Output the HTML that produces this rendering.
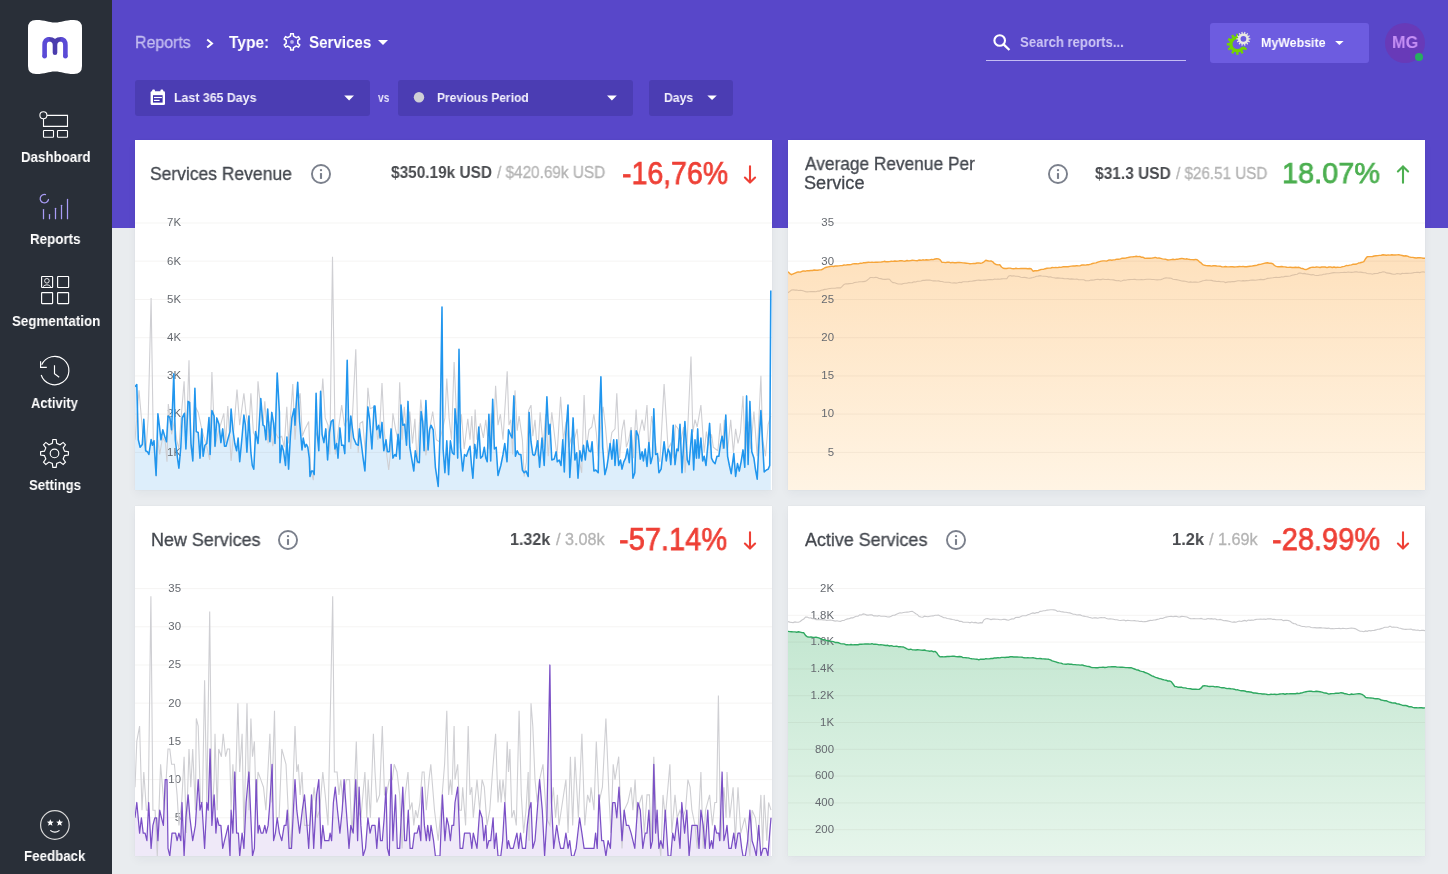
<!DOCTYPE html>
<html><head><meta charset="utf-8">
<style>
html,body{margin:0;padding:0;}
body{width:1448px;height:874px;overflow:hidden;position:relative;background:#e9ecef;font-family:"Liberation Sans",sans-serif;}
.t{position:absolute;white-space:nowrap;line-height:1;transform-origin:0 0;will-change:transform;}
.ic{position:absolute;overflow:visible;}
.bm{display:inline-block;width:0;height:0;}
#side{position:absolute;left:0;top:0;width:112px;height:874px;background:#292f38;}
#head{position:absolute;left:112px;top:0;width:1336px;height:228px;background:#5847c9;}
.btn{position:absolute;background:#4b3db3;border-radius:3px;}
.card{position:absolute;width:637px;height:350px;background:#fff;box-shadow:0 0 1px rgba(40,50,70,0.08),0 4px 9px rgba(30,40,60,0.045);overflow:hidden;}
.ch{position:absolute;left:0;top:0;will-change:transform;}
.gl{stroke:rgba(60,40,20,0.05);stroke-width:1;}
.yl{font-family:"Liberation Sans",sans-serif;font-size:11.4px;fill:#666a70;text-anchor:end;}
</style></head>
<body>
<div id="side"></div>
<div id="head"></div>
<!-- filter buttons -->
<div class="btn" style="left:135px;top:80px;width:235px;height:35.5px;"></div>
<div class="btn" style="left:398px;top:80px;width:235px;height:35.5px;"></div>
<div class="btn" style="left:649px;top:80px;width:84px;height:35.5px;"></div>
<div class="btn" style="left:1210px;top:23px;width:159px;height:39.5px;background:#6d5ce0;"></div>
<!-- search underline -->
<div style="position:absolute;left:986px;top:59.7px;width:200px;height:1.4px;background:#c4bcf3;"></div>
<!-- avatar -->
<div style="position:absolute;left:1385px;top:23px;width:40px;height:40px;border-radius:50%;background:#683ab8;"></div>
<div style="position:absolute;left:1415px;top:53px;width:8px;height:8px;border-radius:50%;background:#27ae60;"></div>

<!-- cards -->
<div class="card" style="left:135px;top:140px;"><svg class="ch" width="637" height="350" viewBox="0 0 637 350">
<path d="M0,350 L0,246.8 1.8,244.6 3.3,299.8 5.1,307.2 7.3,304.4 8.8,279.3 10.6,310.8 12.4,311.7 13.9,314.5 16.1,299.5 17.4,305.3 19,300.8 21.1,335.5 22.9,273.8 24.3,285.2 26,299.8 27.8,289.8 29.7,296.2 31.5,301.7 33,276 34.8,277.5 36.6,289.8 38.8,233.9 40.3,299.8 42.5,318.1 43.9,328.2 45.8,307.2 47.2,277.9 49.4,273.3 50.9,309 53.1,261.4 54.6,262.3 56,303.5 57.8,320.9 59.9,248.2 61.3,291.6 63.2,292.5 65,318.1 66.8,288.9 68.1,316.3 69.9,305.3 71.8,303.5 74,277.5 75.1,314.5 76.9,270.5 79.1,276 80,306.2 81.8,277.9 84,284.3 85.9,302.6 87.7,288.9 89.5,306.2 91,306.2 93.2,298 95,291.6 96.1,269.1 97.9,289.8 99.8,303.5 101.6,310.8 103.1,298 104.7,321.8 107.1,296.2 108.9,275.1 110.4,285.2 111.9,312.3 113.9,276 115.9,312.7 117.3,325.5 118.8,329.1 120.6,291.6 123,303.5 125.8,258.6 128,285.2 129.4,286.1 130.9,299.8 132.7,269.1 134.9,301.7 136.8,272.4 138.6,283.4 140,303.5 142.2,233 144.4,272.4 145,322.7 146.8,305.3 148.5,310.8 150.5,325.5 151.9,297.1 153.6,329.1 155.4,296.2 156.9,277.9 159.1,268.7 160,285.2 160.9,268.7 162.7,242.2 164.6,281.5 167,309.9 168.2,298 170.1,307.2 171.4,304.4 172.8,307.2 174.3,318.1 175,336.5 176.5,331 177.9,331 179.2,334.6 181.1,253.2 182.3,294.3 183.8,310.8 185.6,251.3 187.1,294.3 188.9,302.6 190.8,288.9 192.6,320 194.4,292.5 196.2,281.5 198.1,279.7 199.9,309 201.7,303.5 203,318.1 204.9,287.9 206.7,305.3 208.5,305.3 209.8,313.6 212.2,220.2 214,301.7 215.8,276 218.6,298 221.3,304.4 223.2,305.3 224.4,288.9 226.3,303.5 228.1,318.1 229.9,331 232.9,266.9 234.7,279.7 236.9,309 239.1,266 240,266 241.8,289.8 243.7,285.2 245.1,298 247,282.4 248.8,310.8 251,299.8 252.4,311.7 254.3,311.7 256.1,288.9 257.9,318.1 259.8,314.5 261.2,316.3 263.1,294.3 264.9,319.1 266,265.1 267.8,285.2 269.7,284.3 271.5,305.3 273,261.4 274.8,307.2 276.6,318.1 278.8,331 280.3,310.8 282.5,321.8 284.3,322.7 286.1,271.5 287.6,281.5 289.1,310.8 290.9,260.5 293.1,309.9 294.6,289.8 296,285.2 298.2,289.8 300.4,327.3 303.2,346.5 305,296.2 307,167.1 308.1,309 309.9,332.8 311.8,300.8 313.6,334.6 315.4,300.8 317.3,312.7 319.1,314.5 320,268.7 321.5,285.2 322.7,318.1 324,209.2 325.5,307.2 327.7,331 329.5,314.5 331.4,316.3 333.2,310.8 335,306.2 336.5,325.5 337.9,338.3 339.8,304.4 341.6,318.1 343.8,287 345.6,318.1 347.5,316.3 349.3,307.2 350.8,318.1 352.2,321.8 353.9,274.2 355.7,320.9 357.7,259.2 359.4,309 361.2,307.2 363,335.5 365.8,325.5 368,314.5 369.8,303.5 372,321.8 373.5,289.8 375.3,294.3 377.1,298 378.9,255.9 380.4,316.3 382.2,310.8 384.1,314.5 385.9,314.5 387.4,330 389.2,332.8 391,331 393.2,336.5 394.1,272.4 396,301.7 397.8,314.5 399.1,315.4 400,314.5 402.7,300.8 404.6,327.3 407,298 409.2,325.5 411.9,256.8 413.7,294.3 415,284.3 416.8,320 419.2,319.1 421.1,311.7 422.3,321.8 424.2,320 426,325.5 427.8,299.8 429.3,331.9 430.8,294.3 433,265.1 434.8,337.4 436.6,309 438.1,277.9 439.9,320 441.7,312.7 443,338.3 444.9,310.8 446.7,320.9 448.5,305.3 450.3,320 452.2,300.8 454,310.8 455.8,311.7 457.1,301.7 458.9,331 460.8,330 463.2,332.8 464.4,277.9 465.9,236.7 467.7,307.2 469.9,334.6 471.8,327.3 473.2,318.1 475.1,303.5 476.9,319.1 478.7,299.8 480,325.5 481.8,299.8 483.7,325.5 485.5,320 487,329.1 488.8,321.8 490.6,318.1 492.4,309 494.3,322.7 496.1,290.7 497.9,338.3 499.8,332.8 501.2,290.7 503.4,296.2 505.3,319.1 507.1,311.7 508.4,320.9 510.2,309 512,326.4 513.9,302.6 515.7,323.6 517.5,316.3 518.8,268.7 520.6,314.5 522.5,313.6 523.9,332.8 526.1,329.1 529.1,301.7 531.3,320.9 533.1,309 534.6,312.7 535.8,324.6 538.2,285.2 540,324.6 541.9,309 543.2,310.8 545,284.3 547,332.8 549.9,281.5 552.3,320 554.1,324.6 556.9,289.8 558.7,330 560,299.8 561.5,318.1 562.7,288.9 564,318.1 565.9,298 567.7,320.9 569.2,316.3 571,325.5 572.8,305.3 574.6,283.4 576.5,318.1 578.3,321.8 580.1,323.6 582,316.3 583.8,316.3 585.6,303.5 587.1,296.2 588.9,308.1 590.8,275.1 592.6,316.3 594.4,325.5 596.2,333.7 598.8,313.6 600.6,336.5 602.5,323.6 604.3,331 606.1,321.8 608,309.9 609.8,327.3 611.6,255.9 613.1,324.6 614.9,261.4 616.8,311.7 618.9,318.1 620.4,329.1 622.2,339.2 624.1,299.8 625.9,270.5 627.4,299.8 629.2,331.9 631.4,330 633.2,329.1 634.7,325.5 635.8,150.6 L635.8,350 Z" fill="#ddeefb"/>
<line x1="0" x2="637" y1="312.4" y2="312.4" class="gl"/>
<line x1="0" x2="637" y1="274.1" y2="274.1" class="gl"/>
<line x1="0" x2="637" y1="235.9" y2="235.9" class="gl"/>
<line x1="0" x2="637" y1="197.7" y2="197.7" class="gl"/>
<line x1="0" x2="637" y1="159.5" y2="159.5" class="gl"/>
<line x1="0" x2="637" y1="121.2" y2="121.2" class="gl"/>
<line x1="0" x2="637" y1="83" y2="83" class="gl"/>
<text x="46" y="315.7" class="yl">1K</text>
<text x="46" y="277.4" class="yl">2K</text>
<text x="46" y="239.2" class="yl">3K</text>
<text x="46" y="201" class="yl">4K</text>
<text x="46" y="162.8" class="yl">5K</text>
<text x="46" y="124.5" class="yl">6K</text>
<text x="46" y="86.3" class="yl">7K</text>
<polyline points="0,299.8 4,250.4 6.4,277.9 8.2,299.8 11,310.8 13.2,277.9 16.1,158 18.3,299.8 21.1,336.5 22.9,299.8 24.7,314.5 27.5,298 30.2,301.7 32,321.8 33.3,264.1 34.8,276 36.6,294.3 39.4,281.5 41.7,299.8 43.9,309 46.1,277.9 49.1,241.3 51.3,299.8 54,220.2 55.8,307.2 58.2,319.1 60.4,266.9 63.2,272.4 65.9,285.2 68.6,296.2 72.3,309 74.7,320 76.9,232.1 80,307.2 82.7,294.3 85.5,285.2 88.8,273.3 90.6,303.5 92.8,266 96.1,320.9 98.3,296.2 102,249.5 104.7,285.2 108.9,253.2 111.1,274.2 113.9,290.7 115.9,253.2 118.4,292.5 121.2,298 123,241.3 125.8,270.5 128,285.2 129.8,261.4 133.1,303.5 134.9,281.5 137.8,306.2 140.4,292.5 143.2,298 146.8,296.2 149.2,307.2 151.8,266.9 153.6,303.5 157.8,244 160,299.8 162.7,263.2 165.1,253.2 167.3,296.2 170.1,288.9 173.7,281.5 175.6,329.1 178.3,340.1 181.1,292.5 183.8,299.8 187.8,238.5 190.2,277.9 193,285.2 194.8,314.5 197.5,116.8 200.3,314.5 203,292.5 206.7,265.1 209.4,285.2 213.1,277.9 215.8,309 220.8,209.2 223.2,312.7 225,283.4 227.7,281.5 230.5,314.5 232.9,247.7 235.1,268.7 239.1,266.9 242.7,299.8 244.6,290.7 247,243.1 249.2,290.7 251.9,316.3 253.7,330 256.1,307.2 257.9,273.3 260.5,288.9 262.9,299.8 264.7,242.2 267.1,299.8 269.3,266.9 272,299.8 274.8,271.5 277.5,303.5 279.9,278.8 282.1,323.6 285.8,259.6 288,281.5 290.9,315.4 294,292.5 297.7,271.5 301.3,299.8 304.1,301.7 307.7,288.9 309.9,277.9 311.8,238.5 314.1,277.9 316.5,299.8 319.1,222 321.8,281.5 324,303.5 326.4,274.2 329.2,309 332.8,278.8 335,299.8 336.8,276 338.7,309 340.1,269.6 342,299.8 345.3,283.4 348.4,298 350.8,279.7 353.9,309 356.2,273.3 358.4,299.8 360.6,245.8 363,285.2 365.4,274.2 368,299.8 372.2,231.2 374,285.2 375.8,279.7 377.7,314.5 380,250.4 382.2,290.7 384.1,276 387.4,299.8 389.2,336.5 391.4,321.8 393.6,270.5 396,265.1 397.8,296.2 400,279.7 402.7,316.3 405.1,272.4 408.2,307.2 410.6,274.2 413.2,316.3 416.8,272.4 419.2,292.5 422,316.3 425.6,256.8 428.4,299.8 431.1,281.5 433.9,307.2 436.2,298 438.4,303.5 442.1,288.9 444.9,323.6 446.7,332.8 449.1,255 451.3,309 454,289.8 456.8,287 458.9,274.2 461.3,292.5 463.2,316.3 466.3,277.9 468.1,266.9 470.5,287 473.2,318.1 476.9,292.5 480,288.9 481.8,253.2 484.6,318.1 487,290.7 489.2,279.7 491.4,307.2 493.7,299.8 496.1,287 498.3,318.1 501.1,269.6 502.9,299.8 507.1,279.7 509.3,290.7 512,265.1 513.9,310.8 516.6,276 519.4,294.3 522.1,314.5 524.9,321.8 529.1,244 533.1,309 535.8,303.5 538.6,318.1 540.4,285.2 543.2,288.9 545.5,303.5 548.6,287 550.1,332.8 551.8,309 556,216.5 557.8,292.5 560,279.7 562.2,287 565.9,265.1 569.2,312.7 571.4,291.6 573.7,305.3 576.5,294.3 578.3,307.2 580.5,309 582.9,310.8 585.3,283.4 587.5,309 589.3,279.7 592.6,310.8 595.7,279.7 598.4,312.7 600.6,288.9 603,303.5 605.4,292.5 608,255.9 610.3,316.3 613.1,281.5 615.8,309 618.9,271.5 622.2,316.3 625.9,235.8 627.7,299.8 630.5,316.3 633.2,284.3 635.8,276" fill="none" stroke="#cfcfd3" stroke-width="1.1"/>
<polyline points="0,246.8 1.8,244.6 3.3,299.8 5.1,307.2 7.3,304.4 8.8,279.3 10.6,310.8 12.4,311.7 13.9,314.5 16.1,299.5 17.4,305.3 19,300.8 21.1,335.5 22.9,273.8 24.3,285.2 26,299.8 27.8,289.8 29.7,296.2 31.5,301.7 33,276 34.8,277.5 36.6,289.8 38.8,233.9 40.3,299.8 42.5,318.1 43.9,328.2 45.8,307.2 47.2,277.9 49.4,273.3 50.9,309 53.1,261.4 54.6,262.3 56,303.5 57.8,320.9 59.9,248.2 61.3,291.6 63.2,292.5 65,318.1 66.8,288.9 68.1,316.3 69.9,305.3 71.8,303.5 74,277.5 75.1,314.5 76.9,270.5 79.1,276 80,306.2 81.8,277.9 84,284.3 85.9,302.6 87.7,288.9 89.5,306.2 91,306.2 93.2,298 95,291.6 96.1,269.1 97.9,289.8 99.8,303.5 101.6,310.8 103.1,298 104.7,321.8 107.1,296.2 108.9,275.1 110.4,285.2 111.9,312.3 113.9,276 115.9,312.7 117.3,325.5 118.8,329.1 120.6,291.6 123,303.5 125.8,258.6 128,285.2 129.4,286.1 130.9,299.8 132.7,269.1 134.9,301.7 136.8,272.4 138.6,283.4 140,303.5 142.2,233 144.4,272.4 145,322.7 146.8,305.3 148.5,310.8 150.5,325.5 151.9,297.1 153.6,329.1 155.4,296.2 156.9,277.9 159.1,268.7 160,285.2 160.9,268.7 162.7,242.2 164.6,281.5 167,309.9 168.2,298 170.1,307.2 171.4,304.4 172.8,307.2 174.3,318.1 175,336.5 176.5,331 177.9,331 179.2,334.6 181.1,253.2 182.3,294.3 183.8,310.8 185.6,251.3 187.1,294.3 188.9,302.6 190.8,288.9 192.6,320 194.4,292.5 196.2,281.5 198.1,279.7 199.9,309 201.7,303.5 203,318.1 204.9,287.9 206.7,305.3 208.5,305.3 209.8,313.6 212.2,220.2 214,301.7 215.8,276 218.6,298 221.3,304.4 223.2,305.3 224.4,288.9 226.3,303.5 228.1,318.1 229.9,331 232.9,266.9 234.7,279.7 236.9,309 239.1,266 240,266 241.8,289.8 243.7,285.2 245.1,298 247,282.4 248.8,310.8 251,299.8 252.4,311.7 254.3,311.7 256.1,288.9 257.9,318.1 259.8,314.5 261.2,316.3 263.1,294.3 264.9,319.1 266,265.1 267.8,285.2 269.7,284.3 271.5,305.3 273,261.4 274.8,307.2 276.6,318.1 278.8,331 280.3,310.8 282.5,321.8 284.3,322.7 286.1,271.5 287.6,281.5 289.1,310.8 290.9,260.5 293.1,309.9 294.6,289.8 296,285.2 298.2,289.8 300.4,327.3 303.2,346.5 305,296.2 307,167.1 308.1,309 309.9,332.8 311.8,300.8 313.6,334.6 315.4,300.8 317.3,312.7 319.1,314.5 320,268.7 321.5,285.2 322.7,318.1 324,209.2 325.5,307.2 327.7,331 329.5,314.5 331.4,316.3 333.2,310.8 335,306.2 336.5,325.5 337.9,338.3 339.8,304.4 341.6,318.1 343.8,287 345.6,318.1 347.5,316.3 349.3,307.2 350.8,318.1 352.2,321.8 353.9,274.2 355.7,320.9 357.7,259.2 359.4,309 361.2,307.2 363,335.5 365.8,325.5 368,314.5 369.8,303.5 372,321.8 373.5,289.8 375.3,294.3 377.1,298 378.9,255.9 380.4,316.3 382.2,310.8 384.1,314.5 385.9,314.5 387.4,330 389.2,332.8 391,331 393.2,336.5 394.1,272.4 396,301.7 397.8,314.5 399.1,315.4 400,314.5 402.7,300.8 404.6,327.3 407,298 409.2,325.5 411.9,256.8 413.7,294.3 415,284.3 416.8,320 419.2,319.1 421.1,311.7 422.3,321.8 424.2,320 426,325.5 427.8,299.8 429.3,331.9 430.8,294.3 433,265.1 434.8,337.4 436.6,309 438.1,277.9 439.9,320 441.7,312.7 443,338.3 444.9,310.8 446.7,320.9 448.5,305.3 450.3,320 452.2,300.8 454,310.8 455.8,311.7 457.1,301.7 458.9,331 460.8,330 463.2,332.8 464.4,277.9 465.9,236.7 467.7,307.2 469.9,334.6 471.8,327.3 473.2,318.1 475.1,303.5 476.9,319.1 478.7,299.8 480,325.5 481.8,299.8 483.7,325.5 485.5,320 487,329.1 488.8,321.8 490.6,318.1 492.4,309 494.3,322.7 496.1,290.7 497.9,338.3 499.8,332.8 501.2,290.7 503.4,296.2 505.3,319.1 507.1,311.7 508.4,320.9 510.2,309 512,326.4 513.9,302.6 515.7,323.6 517.5,316.3 518.8,268.7 520.6,314.5 522.5,313.6 523.9,332.8 526.1,329.1 529.1,301.7 531.3,320.9 533.1,309 534.6,312.7 535.8,324.6 538.2,285.2 540,324.6 541.9,309 543.2,310.8 545,284.3 547,332.8 549.9,281.5 552.3,320 554.1,324.6 556.9,289.8 558.7,330 560,299.8 561.5,318.1 562.7,288.9 564,318.1 565.9,298 567.7,320.9 569.2,316.3 571,325.5 572.8,305.3 574.6,283.4 576.5,318.1 578.3,321.8 580.1,323.6 582,316.3 583.8,316.3 585.6,303.5 587.1,296.2 588.9,308.1 590.8,275.1 592.6,316.3 594.4,325.5 596.2,333.7 598.8,313.6 600.6,336.5 602.5,323.6 604.3,331 606.1,321.8 608,309.9 609.8,327.3 611.6,255.9 613.1,324.6 614.9,261.4 616.8,311.7 618.9,318.1 620.4,329.1 622.2,339.2 624.1,299.8 625.9,270.5 627.4,299.8 629.2,331.9 631.4,330 633.2,329.1 634.7,325.5 635.8,150.6" fill="none" stroke="#2196ee" stroke-width="1.55" stroke-linejoin="round"/>
</svg></div>
<div class="card" style="left:788px;top:140px;"><svg class="ch" width="637" height="350" viewBox="0 0 637 350">
<defs><linearGradient id="g2" x1="0" y1="0" x2="0" y2="1"><stop offset="0" stop-color="#fee1bd"/><stop offset="1" stop-color="#fff4e4"/></linearGradient></defs>
<path d="M0,350 L0,131.8 1.8,133.6 3.5,134.7 5.2,133.9 7,133.1 8.8,132.3 10.5,131.9 12.2,132.1 14,131.3 15.8,130.9 17.5,131.2 19.2,130.7 21,130.8 22.8,130.5 24.5,130.5 26.2,130 28,130.2 29.8,130.3 31.5,129.9 33.2,129.9 35,129 36.8,127.7 38.5,127.3 40.2,126.9 42,126.5 43.8,126.1 45.5,126.5 47.2,126 49,126 50.8,125.9 52.5,125.6 54.2,125.6 56,125 57.8,125.1 59.5,124.7 61.2,124.8 63,124.6 64.8,123.9 66.5,123.7 68.2,123.6 70,123.9 71.8,123.3 73.5,123.3 75.2,122.8 77,122.8 78.8,122.5 80.5,122.3 82.2,122.4 84,122.3 85.8,122.4 87.5,122.2 89.2,122.3 91,122.1 92.8,122.1 94.5,121.8 96.2,121.3 98,121.7 99.8,121.7 101.5,121.6 103.2,121.3 105,121.4 106.8,121 108.5,121.3 110.2,121.1 112,120.8 113.8,120.6 115.5,121.1 117.2,121.2 119,120.5 120.8,120.9 122.5,120.6 124.2,120.3 126,120.4 127.8,120.6 129.5,120.7 131.2,120 133,120.3 134.8,119.8 136.5,120.1 138.2,119.7 140,120 141.8,119.9 143.5,119.4 145.2,119.6 147,119 148.8,118.7 150.5,118.9 152.2,119.9 154,122.3 155.8,122.4 157.5,122.6 159.2,122.3 161,122.2 162.8,122.8 164.5,122.4 166.2,122.8 168,122.8 169.8,122.4 171.5,122.5 173.2,122.6 175,122.9 176.8,123 178.5,123.2 180.2,123.4 182,123.8 183.8,123.6 185.5,123.4 187.2,123.5 189,123 190.8,122.9 192.5,123.3 194.2,122.8 196,121.8 197.8,120.3 199.5,120.7 201.2,121.1 203,120.9 204.8,121.8 206.5,123.7 208.2,124.5 210,124.9 211.8,124.8 213.5,127 215.2,128.2 217,128.5 218.8,128.5 220.5,128.1 222.2,128.1 224,128.6 225.8,128.8 227.5,128.3 229.2,128.5 231,128.6 232.8,128.4 234.5,128.5 236.2,128.5 238,128.5 239.8,128.7 241.5,128.5 243.2,128.8 245,131.2 246.8,130.8 248.5,130.8 250.2,130.5 252,129.8 253.8,129.4 255.5,129.4 257.2,128.7 259,128.3 260.8,128.1 262.5,128.1 264.2,127.5 266,127.6 267.8,127.4 269.5,127.6 271.2,127.2 273,127.4 274.8,126.8 276.5,126.7 278.2,126.8 280,126.8 281.8,126.4 283.5,126.1 285.2,125.9 287,126 288.8,125.6 290.5,125.9 292.2,125.7 294,125 295.8,124.9 297.5,125.1 299.2,124.8 301,124.7 302.8,124.2 304.5,123.5 306.2,123.1 308,122.9 309.8,122.1 311.5,121.6 313.2,121.1 315,120.9 316.8,120.9 318.5,121.1 320.2,120.3 322,119.9 323.8,120.3 325.5,119.9 327.2,119.7 329,119.1 330.8,119.2 332.5,118.9 334.2,118.1 336,118.2 337.8,118 339.5,117.6 341.2,117.2 343,116.9 344.8,116.8 346.5,116.6 348.2,116.3 350,116.6 351.8,116.4 353.5,117.3 355.2,117.3 357,118.4 358.8,118.2 360.5,118.3 362.2,118.2 364,118.1 365.8,117.8 367.5,117.4 369.2,118.1 371,118 372.8,118.4 374.5,118.9 376.2,119.1 378,119.3 379.8,120 381.5,119.9 383.2,119.6 385,119.3 386.8,119.6 388.5,119.2 390.2,119.2 392,118.7 393.8,118.4 395.5,118.7 397.2,119.1 399,118.8 400.8,119.3 402.5,119.6 404.2,119.6 406,119.8 407.8,119.4 409.5,120 411.2,121.6 413,122.8 414.8,124.7 416.5,125.3 418.2,125.6 420,125.7 421.8,125.8 423.5,126.1 425.2,125.7 427,125.8 428.8,126 430.5,126.1 432.2,126.2 434,126.9 435.8,126.9 437.5,126.5 439.2,126.9 441,126.9 442.8,126.8 444.5,126.8 446.2,127 448,126.9 449.8,126.7 451.5,126.5 453.2,126.6 455,126.4 456.8,126.7 458.5,126.8 460.2,126.5 462,126.2 463.8,126.1 465.5,125.8 467.2,125.5 469,125.2 470.8,124.5 472.5,124.4 474.2,123.9 476,123.4 477.8,123 479.5,122.8 481.2,123.2 483,123.3 484.8,123.7 486.5,125.5 488.2,126.4 490,126.7 491.8,126.8 493.5,126.5 495.2,126.8 497,126.9 498.8,127.3 500.5,127.4 502.2,127.1 504,127.5 505.8,127.5 507.5,127.3 509.2,127.5 511,127.3 512.8,128.2 514.5,128.5 516.2,129.2 518,129.6 519.8,128.8 521.5,128 523.2,127.4 525,127.1 526.8,127.4 528.5,127 530.2,127.1 532,127.5 533.8,127 535.5,127 537.2,127 539,127.6 540.8,127 542.5,126.9 544.2,127.5 546,127 547.8,127.5 549.5,127.3 551.2,127.4 553,127.2 554.8,126.6 556.5,126.4 558.2,125.5 560,125.6 561.8,125.1 563.5,124.9 565.2,124.1 567,124.2 568.8,124 570.5,123 572.2,122.7 574,122.3 575.8,121.7 577.5,118.8 579.2,116.7 581,116.6 582.8,116.6 584.5,116.5 586.2,116 588,115.8 589.8,115.6 591.5,115.4 593.2,115.2 595,114.8 596.8,115 598.5,115.3 600.2,114.9 602,115.1 603.8,114.7 605.5,115 607.2,115 609,114.9 610.8,114.8 612.5,115.1 614.2,115.5 616,116 617.8,115.8 619.5,116.1 621.2,116.9 623,117.4 624.8,117.4 626.5,117.7 628.2,118 630,117.7 631.8,117.8 633.5,117.9 635.2,118.3 637,118.2 L637,350 Z" fill="url(#g2)"/>
<line x1="0" x2="637" y1="312.4" y2="312.4" class="gl"/>
<line x1="0" x2="637" y1="274.1" y2="274.1" class="gl"/>
<line x1="0" x2="637" y1="235.9" y2="235.9" class="gl"/>
<line x1="0" x2="637" y1="197.7" y2="197.7" class="gl"/>
<line x1="0" x2="637" y1="159.5" y2="159.5" class="gl"/>
<line x1="0" x2="637" y1="121.2" y2="121.2" class="gl"/>
<line x1="0" x2="637" y1="83" y2="83" class="gl"/>
<text x="46" y="315.7" class="yl">5</text>
<text x="46" y="277.4" class="yl">10</text>
<text x="46" y="239.2" class="yl">15</text>
<text x="46" y="201" class="yl">20</text>
<text x="46" y="162.8" class="yl">25</text>
<text x="46" y="124.5" class="yl">30</text>
<text x="46" y="86.3" class="yl">35</text>
<polyline points="0,152.8 1.8,151.4 3.5,150 5.2,149.7 7,150.1 8.8,150 10.5,150.5 12.2,150.4 14,150.5 15.8,151.1 17.5,151.6 19.2,151.9 21,151.8 22.8,151.5 24.5,151.6 26.2,151.5 28,151.7 29.8,151 31.5,151.1 33.2,150.3 35,149.9 36.8,149.4 38.5,149.2 40.2,148.8 42,148.5 43.8,148.3 45.5,148.3 47.2,148.2 49,147.8 50.8,147.9 52.5,147.9 54.2,146.3 56,144.4 57.8,143.8 59.5,143.9 61.2,143.6 63,143.5 64.8,143.2 66.5,142.5 68.2,142.2 70,142 71.8,141.7 73.5,141.8 75.2,141.6 77,141.4 78.8,140.5 80.5,139.2 82.2,137.5 84,137.5 85.8,137.8 87.5,137.3 89.2,137.5 91,138.5 92.8,138.6 94.5,139.1 96.2,139.4 98,139.4 99.8,139 101.5,139.2 103.2,141.4 105,142.6 106.8,142.8 108.5,143.4 110.2,144 112,144 113.8,144.1 115.5,143.5 117.2,143.3 119,143.3 120.8,142.6 122.5,142.8 124.2,142.6 126,141.7 127.8,142 129.5,141.3 131.2,141.3 133,141 134.8,140.4 136.5,140.4 138.2,140.1 140,140.1 141.8,140 143.5,140.5 145.2,140.9 147,140.9 148.8,141 150.5,140.9 152.2,141.4 154,141.5 155.8,142 157.5,142.2 159.2,142.3 161,142.3 162.8,142.8 164.5,143 166.2,142.8 168,143.1 169.8,142.8 171.5,142.2 173.2,142.6 175,141.8 176.8,141.8 178.5,141.8 180.2,141.6 182,141.3 183.8,141.2 185.5,140.9 187.2,140.6 189,140.3 190.8,140.1 192.5,140.4 194.2,140.3 196,140.1 197.8,140.1 199.5,139.7 201.2,139.6 203,139.6 204.8,139.8 206.5,139.1 208.2,139.3 210,139 211.8,139.3 213.5,138.9 215.2,138.8 217,138.7 218.8,138.7 220.5,136.3 222.2,135.5 224,136.1 225.8,135.8 227.5,136.2 229.2,136.3 231,136.5 232.8,137.2 234.5,137.5 236.2,137.3 238,137.6 239.8,138 241.5,138.2 243.2,137.9 245,137.5 246.8,137 248.5,136.3 250.2,136.1 252,135.6 253.8,136 255.5,136.3 257.2,136.3 259,136.5 260.8,137.1 262.5,136.8 264.2,137.5 266,137.8 267.8,138.1 269.5,137.9 271.2,138.1 273,138.3 274.8,138.4 276.5,138.8 278.2,138.7 280,138.6 281.8,139.1 283.5,138.9 285.2,139.1 287,139.3 288.8,139 290.5,139.6 292.2,139.7 294,139.7 295.8,139.8 297.5,140.6 299.2,140.7 301,140.7 302.8,140.1 304.5,140.1 306.2,139.9 308,139.5 309.8,139.3 311.5,139.6 313.2,139.6 315,139 316.8,139.5 318.5,139.5 320.2,139.3 322,139.7 323.8,139.8 325.5,139.9 327.2,140.4 329,140.8 330.8,140.6 332.5,141.2 334.2,140.7 336,140 337.8,140.2 339.5,139.7 341.2,139.6 343,139.5 344.8,139.5 346.5,139.3 348.2,139.6 350,139.7 351.8,139.7 353.5,139.5 355.2,139.7 357,139.5 358.8,139.3 360.5,139.3 362.2,139.3 364,139.5 365.8,139.5 367.5,139.7 369.2,139.9 371,139.8 372.8,139.6 374.5,139.1 376.2,138.3 378,137.9 379.8,138 381.5,138.1 383.2,138.3 385,139.2 386.8,139.5 388.5,139.6 390.2,140 392,140.5 393.8,141 395.5,141.1 397.2,141.3 399,141.8 400.8,142.3 402.5,141.9 404.2,142.2 406,142 407.8,142.1 409.5,142.2 411.2,142 413,141.4 414.8,140.8 416.5,140.5 418.2,140.1 420,140.3 421.8,140.2 423.5,140.4 425.2,140.9 427,141.1 428.8,141.5 430.5,141.2 432.2,141.6 434,141.8 435.8,141.8 437.5,142.6 439.2,142.1 441,141.8 442.8,141.9 444.5,141.5 446.2,141.6 448,141.2 449.8,140.8 451.5,140.7 453.2,141 455,140.6 456.8,140.9 458.5,140.6 460.2,140.8 462,140.2 463.8,140.1 465.5,140 467.2,140.3 469,140 470.8,139.7 472.5,139.4 474.2,139.6 476,139.6 477.8,139.1 479.5,138.4 481.2,138.2 483,138 484.8,137.8 486.5,137.5 488.2,137.3 490,137.5 491.8,137.4 493.5,136.7 495.2,137 497,136.4 498.8,136.4 500.5,136.3 502.2,136 504,135.2 505.8,134.9 507.5,134.5 509.2,134.2 511,133 512.8,133.1 514.5,133.7 516.2,133.4 518,133.9 519.8,134.1 521.5,134.5 523.2,134.9 525,134.6 526.8,135.2 528.5,135.5 530.2,135.5 532,135 533.8,135 535.5,134.3 537.2,134.1 539,133.7 540.8,133.8 542.5,133.3 544.2,132.9 546,132.6 547.8,132.8 549.5,132.7 551.2,132.7 553,132.5 554.8,132.5 556.5,132.2 558.2,132.5 560,132 561.8,132.3 563.5,132.4 565.2,132.3 567,131.9 568.8,131.9 570.5,132.3 572.2,132.1 574,132.4 575.8,132.8 577.5,132.8 579.2,133.5 581,133.8 582.8,133.8 584.5,134.2 586.2,133.6 588,133.5 589.8,133.5 591.5,132.6 593.2,132.5 595,131.8 596.8,132 598.5,132.9 600.2,133.1 602,133.4 603.8,133.9 605.5,134.3 607.2,134.2 609,133.6 610.8,133.7 612.5,134.1 614.2,133.4 616,133.5 617.8,133.3 619.5,133.4 621.2,133.2 623,133.2 624.8,132.9 626.5,132.5 628.2,132.4 630,132.2 631.8,132.6 633.5,132 635.2,131.8 637,132.3" fill="none" stroke="#dcc2a6" stroke-width="1.1"/>
<polyline points="0,131.8 1.8,133.6 3.5,134.7 5.2,133.9 7,133.1 8.8,132.3 10.5,131.9 12.2,132.1 14,131.3 15.8,130.9 17.5,131.2 19.2,130.7 21,130.8 22.8,130.5 24.5,130.5 26.2,130 28,130.2 29.8,130.3 31.5,129.9 33.2,129.9 35,129 36.8,127.7 38.5,127.3 40.2,126.9 42,126.5 43.8,126.1 45.5,126.5 47.2,126 49,126 50.8,125.9 52.5,125.6 54.2,125.6 56,125 57.8,125.1 59.5,124.7 61.2,124.8 63,124.6 64.8,123.9 66.5,123.7 68.2,123.6 70,123.9 71.8,123.3 73.5,123.3 75.2,122.8 77,122.8 78.8,122.5 80.5,122.3 82.2,122.4 84,122.3 85.8,122.4 87.5,122.2 89.2,122.3 91,122.1 92.8,122.1 94.5,121.8 96.2,121.3 98,121.7 99.8,121.7 101.5,121.6 103.2,121.3 105,121.4 106.8,121 108.5,121.3 110.2,121.1 112,120.8 113.8,120.6 115.5,121.1 117.2,121.2 119,120.5 120.8,120.9 122.5,120.6 124.2,120.3 126,120.4 127.8,120.6 129.5,120.7 131.2,120 133,120.3 134.8,119.8 136.5,120.1 138.2,119.7 140,120 141.8,119.9 143.5,119.4 145.2,119.6 147,119 148.8,118.7 150.5,118.9 152.2,119.9 154,122.3 155.8,122.4 157.5,122.6 159.2,122.3 161,122.2 162.8,122.8 164.5,122.4 166.2,122.8 168,122.8 169.8,122.4 171.5,122.5 173.2,122.6 175,122.9 176.8,123 178.5,123.2 180.2,123.4 182,123.8 183.8,123.6 185.5,123.4 187.2,123.5 189,123 190.8,122.9 192.5,123.3 194.2,122.8 196,121.8 197.8,120.3 199.5,120.7 201.2,121.1 203,120.9 204.8,121.8 206.5,123.7 208.2,124.5 210,124.9 211.8,124.8 213.5,127 215.2,128.2 217,128.5 218.8,128.5 220.5,128.1 222.2,128.1 224,128.6 225.8,128.8 227.5,128.3 229.2,128.5 231,128.6 232.8,128.4 234.5,128.5 236.2,128.5 238,128.5 239.8,128.7 241.5,128.5 243.2,128.8 245,131.2 246.8,130.8 248.5,130.8 250.2,130.5 252,129.8 253.8,129.4 255.5,129.4 257.2,128.7 259,128.3 260.8,128.1 262.5,128.1 264.2,127.5 266,127.6 267.8,127.4 269.5,127.6 271.2,127.2 273,127.4 274.8,126.8 276.5,126.7 278.2,126.8 280,126.8 281.8,126.4 283.5,126.1 285.2,125.9 287,126 288.8,125.6 290.5,125.9 292.2,125.7 294,125 295.8,124.9 297.5,125.1 299.2,124.8 301,124.7 302.8,124.2 304.5,123.5 306.2,123.1 308,122.9 309.8,122.1 311.5,121.6 313.2,121.1 315,120.9 316.8,120.9 318.5,121.1 320.2,120.3 322,119.9 323.8,120.3 325.5,119.9 327.2,119.7 329,119.1 330.8,119.2 332.5,118.9 334.2,118.1 336,118.2 337.8,118 339.5,117.6 341.2,117.2 343,116.9 344.8,116.8 346.5,116.6 348.2,116.3 350,116.6 351.8,116.4 353.5,117.3 355.2,117.3 357,118.4 358.8,118.2 360.5,118.3 362.2,118.2 364,118.1 365.8,117.8 367.5,117.4 369.2,118.1 371,118 372.8,118.4 374.5,118.9 376.2,119.1 378,119.3 379.8,120 381.5,119.9 383.2,119.6 385,119.3 386.8,119.6 388.5,119.2 390.2,119.2 392,118.7 393.8,118.4 395.5,118.7 397.2,119.1 399,118.8 400.8,119.3 402.5,119.6 404.2,119.6 406,119.8 407.8,119.4 409.5,120 411.2,121.6 413,122.8 414.8,124.7 416.5,125.3 418.2,125.6 420,125.7 421.8,125.8 423.5,126.1 425.2,125.7 427,125.8 428.8,126 430.5,126.1 432.2,126.2 434,126.9 435.8,126.9 437.5,126.5 439.2,126.9 441,126.9 442.8,126.8 444.5,126.8 446.2,127 448,126.9 449.8,126.7 451.5,126.5 453.2,126.6 455,126.4 456.8,126.7 458.5,126.8 460.2,126.5 462,126.2 463.8,126.1 465.5,125.8 467.2,125.5 469,125.2 470.8,124.5 472.5,124.4 474.2,123.9 476,123.4 477.8,123 479.5,122.8 481.2,123.2 483,123.3 484.8,123.7 486.5,125.5 488.2,126.4 490,126.7 491.8,126.8 493.5,126.5 495.2,126.8 497,126.9 498.8,127.3 500.5,127.4 502.2,127.1 504,127.5 505.8,127.5 507.5,127.3 509.2,127.5 511,127.3 512.8,128.2 514.5,128.5 516.2,129.2 518,129.6 519.8,128.8 521.5,128 523.2,127.4 525,127.1 526.8,127.4 528.5,127 530.2,127.1 532,127.5 533.8,127 535.5,127 537.2,127 539,127.6 540.8,127 542.5,126.9 544.2,127.5 546,127 547.8,127.5 549.5,127.3 551.2,127.4 553,127.2 554.8,126.6 556.5,126.4 558.2,125.5 560,125.6 561.8,125.1 563.5,124.9 565.2,124.1 567,124.2 568.8,124 570.5,123 572.2,122.7 574,122.3 575.8,121.7 577.5,118.8 579.2,116.7 581,116.6 582.8,116.6 584.5,116.5 586.2,116 588,115.8 589.8,115.6 591.5,115.4 593.2,115.2 595,114.8 596.8,115 598.5,115.3 600.2,114.9 602,115.1 603.8,114.7 605.5,115 607.2,115 609,114.9 610.8,114.8 612.5,115.1 614.2,115.5 616,116 617.8,115.8 619.5,116.1 621.2,116.9 623,117.4 624.8,117.4 626.5,117.7 628.2,118 630,117.7 631.8,117.8 633.5,117.9 635.2,118.3 637,118.2" fill="none" stroke="#f6a53a" stroke-width="1.4" stroke-linejoin="round"/>
</svg></div>
<div class="card" style="left:135px;top:506px;"><svg class="ch" width="637" height="350" viewBox="0 0 637 350">
<path d="M0,350 L0,311.8 1.8,296.5 4.6,327.1 6.4,311.8 8.2,327.1 10.1,327.1 11.9,334.7 13.7,296.5 16.1,342.4 17.9,319.4 19.8,311.8 21.6,311.8 22.9,334.7 24.7,304.2 26.5,311.8 28.4,319.4 30.2,273.6 32,273.6 33,342.4 34.8,350 37,327.1 38.8,327.1 40.6,327.1 42.1,334.7 43.9,327.1 45.8,334.7 47,296.5 49.1,350 50.9,311.8 53.1,288.9 54.9,311.8 57.7,334.7 60.4,319.4 63.2,273.6 65,304.2 66.8,296.5 69.6,342.4 71.8,296.5 73.2,304.2 75.1,243 76.9,319.4 79.1,288.9 80,304.2 80.9,327.1 82.2,311.8 84,319.4 85.9,319.4 87.7,342.4 89.5,334.7 91.4,327.1 93.2,319.4 95,350 96.1,304.2 97.9,327.1 99.8,266 101.6,327.1 103.4,327.1 104.7,350 107.1,327.1 108.9,342.4 111.1,296.5 113.9,266 116.2,319.4 117.5,350 119.4,342.4 121.2,273.6 123,327.1 124.3,319.4 126.1,327.1 128,327.1 129.8,319.4 131.3,327.1 133.1,319.4 134.9,296.5 137.1,258.3 138.6,334.7 140.4,327.1 142.2,311.8 144.4,327.1 146.8,334.7 149.2,319.4 151,319.4 152.3,304.2 154.1,342.4 156.5,342.4 158.4,304.2 160,273.6 161.8,304.2 164.6,327.1 167.3,304.2 169.5,288.9 171.4,311.8 173.7,342.4 176.5,288.9 178.7,342.4 181.6,288.9 183.8,273.6 186,342.4 187.8,319.4 189.7,334.7 192,334.7 193.9,334.7 195.1,327.1 196.6,334.7 198.4,296.5 200.3,281.2 202.5,304.2 204.9,327.1 207.2,304.2 209.1,273.6 211.3,304.2 214,342.4 215.8,319.4 218.2,327.1 220.8,273.6 222.6,334.7 224.1,281.2 225.9,319.4 228.1,350 230.5,342.4 232.9,311.8 235.1,327.1 236.9,319.4 240,319.4 241.8,342.4 244,311.8 245.5,334.7 247.3,334.7 249.2,311.8 251,281.2 252.4,342.4 254.3,350 256.1,258.3 257.9,334.7 260.5,288.9 262.3,342.4 264.7,342.4 267.8,281.2 269.7,334.7 271.5,334.7 273.3,304.2 275.1,342.4 277.5,342.4 279.4,327.1 282.1,327.1 283.9,319.4 285.8,334.7 287.2,281.2 289.4,319.4 291.3,334.7 292.7,319.4 294.6,334.7 296,319.4 298.6,334.7 300.4,350 303.2,350 305,350 307.4,288.9 309.9,334.7 311.8,311.8 313.6,319.4 315.4,334.7 316.9,319.4 318.7,319.4 320,296.5 322.7,281.2 325.1,342.4 327.7,342.4 329.5,327.1 331.4,327.1 333.2,327.1 335,327.1 336.8,342.4 338.3,327.1 340.1,334.7 342,342.4 344.7,304.2 347.1,311.8 348.9,334.7 350.8,319.4 352,342.4 353.9,334.7 355.7,334.7 358.1,311.8 359.4,342.4 361.2,327.1 363,350 365.8,350 367.6,334.7 369.8,296.5 372.2,342.4 373.5,334.7 375.3,342.4 378.2,342.4 380,334.7 381.9,327.1 383.7,342.4 385.5,327.1 387.4,342.4 390.5,342.4 392.3,319.4 394.1,304.2 396,296.5 397.8,342.4 400,334.7 402.3,304.2 404.6,273.6 407.3,304.2 409.6,350 411.9,311.8 414.9,159 416.5,296.5 418.7,342.4 421.7,319.4 424,334.7 425.6,342.4 428.6,342.4 430.9,327.1 433.1,342.4 434.7,334.7 436.6,350 438.9,350 441.1,342.4 444.6,311.8 446.9,327.1 449.1,342.4 452.6,342.4 456,342.4 459,342.4 460.6,327.1 462.2,342.4 464,288.9 466.7,334.7 468.6,334.7 470.9,350 473.1,334.7 475.4,342.4 477.7,296.5 480,296.5 481.8,311.8 484,281.2 487,334.7 489.2,304.2 491.4,319.4 493.7,319.4 496.1,327.1 499.8,342.4 502.9,296.5 505.3,304.2 507.8,342.4 510.2,327.1 512,327.1 513.9,304.2 515.7,342.4 517.5,334.7 518.8,258.3 520.6,327.1 522.1,304.2 523.9,342.4 525.8,334.7 528,342.4 530.3,304.2 533.1,350 535.8,350 537.7,327.1 539.5,334.7 542.2,311.8 545,342.4 546.8,296.5 549.6,327.1 551.8,304.2 554.1,350 556.9,319.4 560,319.4 562.2,319.4 564,342.4 565.9,304.2 568.2,319.4 570.1,342.4 572.8,304.2 574.6,342.4 576.5,334.7 577.9,342.4 579.8,319.4 581.6,327.1 583.8,327.1 584.7,334.7 587.1,266 588.9,334.7 590.8,327.1 592,319.4 593.9,342.4 596.2,342.4 598.8,327.1 600.6,342.4 603,327.1 604.9,327.1 606.7,342.4 608,350 610.3,350 612.7,334.7 614.9,304.2 617.1,334.7 619.5,342.4 621.3,350 623.7,319.4 625.9,350 628.1,342.4 631,342.4 632.9,350 634.7,327.1 636,311.8 L636,350 Z" fill="#efe9f8"/>
<line x1="0" x2="637" y1="311.8" y2="311.8" class="gl"/>
<line x1="0" x2="637" y1="273.6" y2="273.6" class="gl"/>
<line x1="0" x2="637" y1="235.4" y2="235.4" class="gl"/>
<line x1="0" x2="637" y1="197.2" y2="197.2" class="gl"/>
<line x1="0" x2="637" y1="159" y2="159" class="gl"/>
<line x1="0" x2="637" y1="120.8" y2="120.8" class="gl"/>
<line x1="0" x2="637" y1="82.6" y2="82.6" class="gl"/>
<text x="46" y="315.1" class="yl">5</text>
<text x="46" y="276.9" class="yl">10</text>
<text x="46" y="238.7" class="yl">15</text>
<text x="46" y="200.5" class="yl">20</text>
<text x="46" y="162.3" class="yl">25</text>
<text x="46" y="124.1" class="yl">30</text>
<text x="46" y="85.9" class="yl">35</text>
<polyline points="0,281.2 1.8,235.4 4.6,220.1 7,304.2 8.8,266 11.4,304.2 13.2,304.2 15.9,90.2 17.9,304.2 20.1,304.2 22.3,350 25.6,258.3 27.5,281.2 29.3,304.2 33,243 34.8,243 36.6,258.3 39.4,258.3 42.1,288.9 43.9,319.4 46.7,296.5 49.1,250.7 51.3,327.1 54,243 55.8,281.2 57.7,243 60.4,304.2 61.3,212.5 63.2,220.1 65.5,296.5 67.4,296.5 69.6,174.3 71.8,296.5 74.7,105.5 76.9,311.8 79.1,273.6 80,227.8 82.2,304.2 83.7,243 86.4,250.7 88.2,227.8 90.6,250.7 92.4,243 94.6,243 96.1,304.2 97.9,258.3 99.8,304.2 102.9,197.2 104.7,266 107.1,227.8 108.9,327.1 112,197.2 113.9,304.2 115.9,212.5 117.5,250.7 119.4,235.4 121.2,304.2 123,266 125.8,273.6 128.5,281.2 130.9,304.2 134.9,227.8 136.8,296.5 139.5,204.8 141.3,311.8 144.1,311.8 146.8,243 151,258.3 153.2,304.2 156,342.4 160,220.1 161.8,266 163.3,258.3 165.1,288.9 167,266 169.5,319.4 172.4,319.4 174.6,319.4 179.2,281.2 182,311.8 184.7,304.2 187.8,266 190.2,288.9 193,319.4 195.7,189.6 197.7,90.2 199.4,266 202.1,266 203.9,288.9 205.8,273.6 208,296.5 211.3,273.6 214.6,273.6 216.8,327.1 218.9,296.5 221.3,235.4 223.2,304.2 225.9,311.8 229.9,266 231.8,311.8 233.2,273.6 235.4,311.8 238.4,227.8 240,266 241.8,296.5 244.6,288.9 247.3,220.1 249.5,288.9 251.4,288.9 254.3,273.6 257.4,273.6 259.2,258.3 262,266 264.7,288.9 267.1,342.4 270.2,288.9 273,266 274.8,304.2 277,296.5 278.8,319.4 280.6,304.2 282.5,311.8 284.9,296.5 287.2,266 289.1,266 291.3,304.2 294,273.6 295.8,258.3 299.5,304.2 303.2,334.7 305.9,304.2 309.6,258.3 311.8,204.8 313.6,288.9 315.4,273.6 316.9,288.9 319.1,220.1 320,273.6 322.7,258.3 324.6,304.2 326.4,304.2 327.7,281.2 330.6,319.4 333.2,220.1 335,288.9 336.8,281.2 338.3,311.8 342,273.6 344.7,304.2 347.1,273.6 349.3,281.2 352,319.4 354.8,304.2 357.5,266 360.6,227.8 363,296.5 364.9,273.6 366.1,296.5 368,273.6 370.3,296.5 372.2,235.4 373.5,266 374.9,243 376.8,311.8 378.9,304.2 381.3,319.4 384.1,204.8 386.3,288.9 388.6,327.1 391,304.2 393.2,266 394.1,334.7 396,197.2 397.8,220.1 400,273.6 402.3,296.5 404.6,273.6 408,258.3 411.4,311.8 414.9,319.4 418.3,281.2 420.6,311.8 422.4,288.9 424,319.4 427.4,296.5 430.9,273.6 433.1,327.1 435.4,250.7 437.7,319.4 440,250.7 443.4,311.8 446.9,227.8 449.8,319.4 452.6,288.9 454.9,296.5 456,281.2 459,304.2 461.3,235.4 464,296.5 467.4,281.2 470.9,212.5 474.3,296.5 475.9,327.1 478.2,258.3 480,273.6 483.7,250.7 487,342.4 489.2,304.2 492.8,296.5 496.1,281.2 497.9,304.2 500.1,273.6 502,311.8 504.7,296.5 507.1,288.9 509.3,327.1 512,288.9 514.4,288.9 516.2,334.7 518.8,250.7 521.2,311.8 523.9,334.7 525.8,350 528,288.9 530.3,311.8 534.9,258.3 536.8,327.1 540,288.9 542.2,311.8 545,304.2 547.7,311.8 550.5,304.2 552.9,273.6 555.1,281.2 556.9,304.2 560,319.4 562.2,342.4 565.9,266 568.2,342.4 570.6,304.2 574.6,288.9 577.4,319.4 579.8,296.5 581.6,296.5 583.4,189.6 585.6,334.7 588.9,281.2 591.1,311.8 592,266 594.8,311.8 598.1,281.2 600.3,334.7 603,281.2 605.8,327.1 609.8,311.8 612.2,327.1 614.9,350 617.1,304.2 620.4,311.8 623.2,334.7 625.9,288.9 627.7,342.4 629.2,288.9 631.8,334.7 633.6,296.5 636,304.2" fill="none" stroke="#cfcfd3" stroke-width="1.1"/>
<polyline points="0,311.8 1.8,296.5 4.6,327.1 6.4,311.8 8.2,327.1 10.1,327.1 11.9,334.7 13.7,296.5 16.1,342.4 17.9,319.4 19.8,311.8 21.6,311.8 22.9,334.7 24.7,304.2 26.5,311.8 28.4,319.4 30.2,273.6 32,273.6 33,342.4 34.8,350 37,327.1 38.8,327.1 40.6,327.1 42.1,334.7 43.9,327.1 45.8,334.7 47,296.5 49.1,350 50.9,311.8 53.1,288.9 54.9,311.8 57.7,334.7 60.4,319.4 63.2,273.6 65,304.2 66.8,296.5 69.6,342.4 71.8,296.5 73.2,304.2 75.1,243 76.9,319.4 79.1,288.9 80,304.2 80.9,327.1 82.2,311.8 84,319.4 85.9,319.4 87.7,342.4 89.5,334.7 91.4,327.1 93.2,319.4 95,350 96.1,304.2 97.9,327.1 99.8,266 101.6,327.1 103.4,327.1 104.7,350 107.1,327.1 108.9,342.4 111.1,296.5 113.9,266 116.2,319.4 117.5,350 119.4,342.4 121.2,273.6 123,327.1 124.3,319.4 126.1,327.1 128,327.1 129.8,319.4 131.3,327.1 133.1,319.4 134.9,296.5 137.1,258.3 138.6,334.7 140.4,327.1 142.2,311.8 144.4,327.1 146.8,334.7 149.2,319.4 151,319.4 152.3,304.2 154.1,342.4 156.5,342.4 158.4,304.2 160,273.6 161.8,304.2 164.6,327.1 167.3,304.2 169.5,288.9 171.4,311.8 173.7,342.4 176.5,288.9 178.7,342.4 181.6,288.9 183.8,273.6 186,342.4 187.8,319.4 189.7,334.7 192,334.7 193.9,334.7 195.1,327.1 196.6,334.7 198.4,296.5 200.3,281.2 202.5,304.2 204.9,327.1 207.2,304.2 209.1,273.6 211.3,304.2 214,342.4 215.8,319.4 218.2,327.1 220.8,273.6 222.6,334.7 224.1,281.2 225.9,319.4 228.1,350 230.5,342.4 232.9,311.8 235.1,327.1 236.9,319.4 240,319.4 241.8,342.4 244,311.8 245.5,334.7 247.3,334.7 249.2,311.8 251,281.2 252.4,342.4 254.3,350 256.1,258.3 257.9,334.7 260.5,288.9 262.3,342.4 264.7,342.4 267.8,281.2 269.7,334.7 271.5,334.7 273.3,304.2 275.1,342.4 277.5,342.4 279.4,327.1 282.1,327.1 283.9,319.4 285.8,334.7 287.2,281.2 289.4,319.4 291.3,334.7 292.7,319.4 294.6,334.7 296,319.4 298.6,334.7 300.4,350 303.2,350 305,350 307.4,288.9 309.9,334.7 311.8,311.8 313.6,319.4 315.4,334.7 316.9,319.4 318.7,319.4 320,296.5 322.7,281.2 325.1,342.4 327.7,342.4 329.5,327.1 331.4,327.1 333.2,327.1 335,327.1 336.8,342.4 338.3,327.1 340.1,334.7 342,342.4 344.7,304.2 347.1,311.8 348.9,334.7 350.8,319.4 352,342.4 353.9,334.7 355.7,334.7 358.1,311.8 359.4,342.4 361.2,327.1 363,350 365.8,350 367.6,334.7 369.8,296.5 372.2,342.4 373.5,334.7 375.3,342.4 378.2,342.4 380,334.7 381.9,327.1 383.7,342.4 385.5,327.1 387.4,342.4 390.5,342.4 392.3,319.4 394.1,304.2 396,296.5 397.8,342.4 400,334.7 402.3,304.2 404.6,273.6 407.3,304.2 409.6,350 411.9,311.8 414.9,159 416.5,296.5 418.7,342.4 421.7,319.4 424,334.7 425.6,342.4 428.6,342.4 430.9,327.1 433.1,342.4 434.7,334.7 436.6,350 438.9,350 441.1,342.4 444.6,311.8 446.9,327.1 449.1,342.4 452.6,342.4 456,342.4 459,342.4 460.6,327.1 462.2,342.4 464,288.9 466.7,334.7 468.6,334.7 470.9,350 473.1,334.7 475.4,342.4 477.7,296.5 480,296.5 481.8,311.8 484,281.2 487,334.7 489.2,304.2 491.4,319.4 493.7,319.4 496.1,327.1 499.8,342.4 502.9,296.5 505.3,304.2 507.8,342.4 510.2,327.1 512,327.1 513.9,304.2 515.7,342.4 517.5,334.7 518.8,258.3 520.6,327.1 522.1,304.2 523.9,342.4 525.8,334.7 528,342.4 530.3,304.2 533.1,350 535.8,350 537.7,327.1 539.5,334.7 542.2,311.8 545,342.4 546.8,296.5 549.6,327.1 551.8,304.2 554.1,350 556.9,319.4 560,319.4 562.2,319.4 564,342.4 565.9,304.2 568.2,319.4 570.1,342.4 572.8,304.2 574.6,342.4 576.5,334.7 577.9,342.4 579.8,319.4 581.6,327.1 583.8,327.1 584.7,334.7 587.1,266 588.9,334.7 590.8,327.1 592,319.4 593.9,342.4 596.2,342.4 598.8,327.1 600.6,342.4 603,327.1 604.9,327.1 606.7,342.4 608,350 610.3,350 612.7,334.7 614.9,304.2 617.1,334.7 619.5,342.4 621.3,350 623.7,319.4 625.9,350 628.1,342.4 631,342.4 632.9,350 634.7,327.1 636,311.8" fill="none" stroke="#7b50c6" stroke-width="1.25" stroke-linejoin="round"/>
</svg></div>
<div class="card" style="left:788px;top:506px;"><svg class="ch" width="637" height="350" viewBox="0 0 637 350">
<defs><linearGradient id="g4" x1="0" y1="0" x2="0" y2="1"><stop offset="0" stop-color="#c4e7d1"/><stop offset="1" stop-color="#e6f5eb"/></linearGradient></defs>
<path d="M0,350 L0,125.4 1.8,125.6 3.5,125.7 5.2,125.9 7,125.9 8.8,126.2 10.5,125.8 12.2,126.1 14,126.6 15.8,126.8 17.5,129.4 19.2,130.8 21,131.1 22.8,131 24.5,131.3 26.2,131.4 28,131.2 29.8,131.6 31.5,132.2 33.2,133.1 35,133.5 36.8,133.7 38.5,134.6 40.2,134.7 42,135.3 43.8,135.4 45.5,135.6 47.2,136.5 49,136.5 50.8,136.8 52.5,137.6 54.2,137.9 56,137.9 57.8,138.7 59.5,138.8 61.2,138.9 63,138.5 64.8,138.9 66.5,138.7 68.2,138.8 70,138.7 71.8,138.3 73.5,138.3 75.2,138.1 77,138 78.8,137.9 80.5,138 82.2,138.1 84,137.7 85.8,138.3 87.5,138.2 89.2,138.4 91,138.9 92.8,138.8 94.5,138.9 96.2,139.2 98,139.5 99.8,139.3 101.5,140 103.2,139.6 105,140.2 106.8,140.4 108.5,140.1 110.2,140.7 112,140.6 113.8,140.9 115.5,141 117.2,141.9 119,142.9 120.8,143.6 122.5,143.2 124.2,143.7 126,143.9 127.8,144 129.5,143.7 131.2,143.9 133,144.1 134.8,144.3 136.5,144 138.2,144.6 140,144.9 141.8,145.2 143.5,144.9 145.2,145.7 147,145.4 148.8,146.8 150.5,149.5 152.2,150.9 154,150.6 155.8,150.9 157.5,150.7 159.2,150.5 161,150.5 162.8,150.4 164.5,150.3 166.2,150.3 168,150.6 169.8,150.8 171.5,150.5 173.2,150.7 175,151.6 176.8,151.6 178.5,151.8 180.2,151.9 182,152.4 183.8,152.8 185.5,152.9 187.2,153.1 189,153.2 190.8,153.8 192.5,153.1 194.2,153.2 196,153.3 197.8,152.7 199.5,152.9 201.2,152.9 203,152.5 204.8,152.5 206.5,151.9 208.2,152 210,151.6 211.8,151.9 213.5,151.4 215.2,151.4 217,151.5 218.8,151.3 220.5,151.2 222.2,150.8 224,150.7 225.8,151 227.5,151 229.2,151 231,151.1 232.8,151.1 234.5,151.3 236.2,151.8 238,151.9 239.8,151.8 241.5,151.9 243.2,151.9 245,151.8 246.8,152.1 248.5,152.5 250.2,152.6 252,152.5 253.8,152.8 255.5,152.9 257.2,153 259,153.1 260.8,153.3 262.5,153.9 264.2,154.9 266,155.4 267.8,155.9 269.5,156.5 271.2,156.9 273,157.1 274.8,157.9 276.5,158.1 278.2,158.2 280,157.9 281.8,158.3 283.5,158.3 285.2,158.6 287,158.6 288.8,158.9 290.5,158.9 292.2,159.1 294,158.9 295.8,159.5 297.5,159.9 299.2,160.4 301,160.5 302.8,161.2 304.5,161.6 306.2,161.6 308,161.7 309.8,161.7 311.5,161.4 313.2,161.4 315,161.1 316.8,161.5 318.5,161.4 320.2,160.9 322,160.9 323.8,160.7 325.5,160.8 327.2,160.6 329,161.1 330.8,161.1 332.5,161.2 334.2,161.2 336,161.4 337.8,161.6 339.5,161.6 341.2,161.8 343,161.6 344.8,162.3 346.5,163 348.2,163.7 350,164 351.8,164.9 353.5,165.4 355.2,165.6 357,166.5 358.8,167.2 360.5,167.9 362.2,168.8 364,169.8 365.8,170.5 367.5,171.4 369.2,171.8 371,172.5 372.8,172.9 374.5,173.5 376.2,173.9 378,174.2 379.8,175 381.5,174.9 383.2,175.6 385,178 386.8,180.5 388.5,180.6 390.2,181.3 392,181.2 393.8,181.3 395.5,181.9 397.2,181.9 399,182.4 400.8,182.6 402.5,182.8 404.2,183.2 406,183.2 407.8,183.1 409.5,183.4 411.2,183.4 413,182.2 414.8,180 416.5,179.8 418.2,179.9 420,180.3 421.8,180.5 423.5,180.4 425.2,180.4 427,180.9 428.8,180.6 430.5,180.9 432.2,181.4 434,181.7 435.8,181.6 437.5,182.2 439.2,182.6 441,182.5 442.8,182.8 444.5,182.9 446.2,183.2 448,183.9 449.8,183.8 451.5,184.4 453.2,184.7 455,184.8 456.8,185 458.5,185.7 460.2,185.7 462,186 463.8,186.3 465.5,187 467.2,187 469,187.2 470.8,187.6 472.5,187.6 474.2,188 476,188 477.8,188.1 479.5,188.5 481.2,188.6 483,188.2 484.8,188.4 486.5,188.2 488.2,188.5 490,188.4 491.8,188 493.5,187.9 495.2,187.8 497,188.2 498.8,187.8 500.5,187.9 502.2,187.7 504,187.8 505.8,187.7 507.5,187.7 509.2,187.3 511,187.6 512.8,187 514.5,186.7 516.2,186.1 518,185.7 519.8,185.4 521.5,185.2 523.2,185.2 525,185.6 526.8,185.5 528.5,185.3 530.2,185.5 532,185.7 533.8,186.1 535.5,186.7 537.2,187 539,187.3 540.8,188.1 542.5,187.7 544.2,187.6 546,187.6 547.8,187.3 549.5,187.1 551.2,187.2 553,186.7 554.8,187 556.5,187.7 558.2,187.8 560,188.4 561.8,188.6 563.5,188 565.2,188.4 567,188.1 568.8,187.9 570.5,187.7 572.2,187.8 574,188.4 575.8,189.5 577.5,191.3 579.2,191.8 581,191.9 582.8,192 584.5,192.1 586.2,192.5 588,192.8 589.8,192.7 591.5,193.2 593.2,194 595,194.4 596.8,194.8 598.5,194.8 600.2,195.7 602,196.3 603.8,196.7 605.5,197 607.2,197 609,197.9 610.8,198 612.5,198.6 614.2,199.2 616,199.5 617.8,199.5 619.5,200 621.2,200.8 623,200.7 624.8,201.4 626.5,201.7 628.2,201.6 630,201.9 631.8,201.7 633.5,201.8 635.2,202 637,201.9 L637,350 Z" fill="url(#g4)"/>
<line x1="0" x2="637" y1="323.7" y2="323.7" class="gl"/>
<line x1="0" x2="637" y1="296.9" y2="296.9" class="gl"/>
<line x1="0" x2="637" y1="270.1" y2="270.1" class="gl"/>
<line x1="0" x2="637" y1="243.3" y2="243.3" class="gl"/>
<line x1="0" x2="637" y1="216.5" y2="216.5" class="gl"/>
<line x1="0" x2="637" y1="189.7" y2="189.7" class="gl"/>
<line x1="0" x2="637" y1="162.9" y2="162.9" class="gl"/>
<line x1="0" x2="637" y1="136.1" y2="136.1" class="gl"/>
<line x1="0" x2="637" y1="109.3" y2="109.3" class="gl"/>
<line x1="0" x2="637" y1="82.5" y2="82.5" class="gl"/>
<text x="46" y="327" class="yl">200</text>
<text x="46" y="300.2" class="yl">400</text>
<text x="46" y="273.4" class="yl">600</text>
<text x="46" y="246.6" class="yl">800</text>
<text x="46" y="219.8" class="yl">1K</text>
<text x="46" y="193" class="yl">1.2K</text>
<text x="46" y="166.2" class="yl">1.4K</text>
<text x="46" y="139.4" class="yl">1.6K</text>
<text x="46" y="112.6" class="yl">1.8K</text>
<text x="46" y="85.8" class="yl">2K</text>
<polyline points="0,115.6 1.8,116.1 3.5,116.4 5.2,116.6 7,115.9 8.8,116.2 10.5,116.2 12.2,115.5 14,114 15.8,113.1 17.5,111.1 19.2,111 21,112 22.8,111.8 24.5,112.6 26.2,112.8 28,113.6 29.8,113.4 31.5,113.7 33.2,113.4 35,113.9 36.8,113.7 38.5,114.4 40.2,114.3 42,114 43.8,114.3 45.5,114.6 47.2,115.1 49,114.7 50.8,115.3 52.5,115.4 54.2,114.5 56,114.5 57.8,113.4 59.5,112.9 61.2,112.8 63,111.9 64.8,111.9 66.5,111 68.2,110.3 70,110.2 71.8,108.9 73.5,109 75.2,107.9 77,108.2 78.8,109.1 80.5,109.1 82.2,108.8 84,108.9 85.8,109.9 87.5,109.8 89.2,110.1 91,109.6 92.8,110.3 94.5,110.2 96.2,110.3 98,110.5 99.8,111 101.5,110.9 103.2,110.3 105,109.2 106.8,109.1 108.5,108.2 110.2,107.5 112,106.8 113.8,107 115.5,106.5 117.2,106.3 119,106.1 120.8,106 122.5,105.5 124.2,105.3 126,106.4 127.8,107.7 129.5,108.6 131.2,110.6 133,111 134.8,111.2 136.5,110.2 138.2,110.5 140,110.8 141.8,110.3 143.5,110 145.2,109.9 147,109.3 148.8,109.2 150.5,109.1 152.2,110 154,110.7 155.8,111.8 157.5,111.8 159.2,112.5 161,112.8 162.8,113.1 164.5,113.5 166.2,113.8 168,114.4 169.8,114.2 171.5,115.4 173.2,115.2 175,116.1 176.8,116.2 178.5,116.3 180.2,116.2 182,116.8 183.8,116 185.5,116.7 187.2,116.4 189,116.9 190.8,117.1 192.5,116.6 194.2,116.8 196,113.8 197.8,112.7 199.5,112.6 201.2,113 203,113.6 204.8,113.1 206.5,113.1 208.2,113.3 210,113.2 211.8,113.7 213.5,113.7 215.2,113.3 217,113.4 218.8,113.9 220.5,114.2 222.2,113.6 224,112.9 225.8,113 227.5,111.6 229.2,111.2 231,111.4 232.8,110.6 234.5,109.7 236.2,109.8 238,109.7 239.8,108.8 241.5,108.2 243.2,107.4 245,106.9 246.8,107.3 248.5,106.5 250.2,106.6 252,105.4 253.8,105.3 255.5,104.8 257.2,104.8 259,104.1 260.8,104 262.5,103.8 264.2,103.8 266,103.9 267.8,104.2 269.5,105.5 271.2,105 273,105.7 274.8,105.9 276.5,106.3 278.2,106.2 280,106.8 281.8,106.9 283.5,107.6 285.2,108.3 287,108.3 288.8,109 290.5,108.7 292.2,108.9 294,109.7 295.8,110.1 297.5,110.5 299.2,110.7 301,111.3 302.8,111.8 304.5,112.3 306.2,111.8 308,111.9 309.8,112.3 311.5,111.7 313.2,111.6 315,111.8 316.8,111.6 318.5,112.6 320.2,113 322,112.8 323.8,113 325.5,113.3 327.2,113.8 329,113.8 330.8,114.3 332.5,114.5 334.2,114.2 336,114.1 337.8,114.8 339.5,114.3 341.2,114.5 343,114.7 344.8,114.8 346.5,114.6 348.2,115 350,115 351.8,115.5 353.5,115.4 355.2,115.8 357,115.6 358.8,115.4 360.5,114.9 362.2,114.4 364,114.5 365.8,114 367.5,113.9 369.2,113.4 371,113 372.8,112.3 374.5,112.5 376.2,111.7 378,111.1 379.8,110.7 381.5,110.5 383.2,110.3 385,110.7 386.8,110.4 388.5,110.3 390.2,111 392,110.9 393.8,110.4 395.5,110.5 397.2,110.7 399,111 400.8,112 402.5,112.6 404.2,112.7 406,112.6 407.8,112.8 409.5,112.8 411.2,112.7 413,112.4 414.8,113 416.5,113.2 418.2,113.1 420,112.5 421.8,112.9 423.5,112.6 425.2,113.1 427,112.8 428.8,113.6 430.5,113.7 432.2,113.4 434,113.9 435.8,114.8 437.5,114.6 439.2,114.9 441,115.2 442.8,115.8 444.5,116.3 446.2,115.9 448,116.2 449.8,115.6 451.5,115 453.2,115.5 455,114.9 456.8,114.4 458.5,115.1 460.2,114 462,114.4 463.8,114.1 465.5,114.3 467.2,113.6 469,113.3 470.8,113.2 472.5,113 474.2,113.3 476,113 477.8,113.4 479.5,112.8 481.2,112.9 483,112.7 484.8,113.4 486.5,113.4 488.2,113.7 490,113.7 491.8,113.7 493.5,113.6 495.2,114.6 497,114.4 498.8,114.2 500.5,114.6 502.2,115.3 504,116.7 505.8,117.6 507.5,117.7 509.2,119 511,119.3 512.8,120.1 514.5,120.5 516.2,120.5 518,121 519.8,120.8 521.5,120.7 523.2,121.5 525,121.8 526.8,121.6 528.5,121.9 530.2,121.9 532,121.6 533.8,121.9 535.5,122 537.2,122.1 539,122.4 540.8,122.1 542.5,122.7 544.2,122.6 546,122.7 547.8,122.5 549.5,122.5 551.2,122.4 553,122.7 554.8,122.3 556.5,122.5 558.2,122.7 560,122.5 561.8,122.3 563.5,122.1 565.2,122.2 567,122.6 568.8,123.6 570.5,124.5 572.2,125.2 574,125.3 575.8,125.7 577.5,124.9 579.2,125.3 581,124.5 582.8,124.9 584.5,124.5 586.2,124.4 588,123.9 589.8,123.3 591.5,123.1 593.2,122.6 595,122.1 596.8,121.3 598.5,121.2 600.2,121.2 602,120.1 603.8,121.2 605.5,121.1 607.2,121.3 609,121.3 610.8,122 612.5,122.2 614.2,122.9 616,123.3 617.8,123.4 619.5,123.3 621.2,123.2 623,123.1 624.8,123.9 626.5,123.9 628.2,124.2 630,124 631.8,124.7 633.5,124.2 635.2,124.4 637,124.6" fill="none" stroke="#c9c9cc" stroke-width="1.1"/>
<polyline points="0,125.4 1.8,125.6 3.5,125.7 5.2,125.9 7,125.9 8.8,126.2 10.5,125.8 12.2,126.1 14,126.6 15.8,126.8 17.5,129.4 19.2,130.8 21,131.1 22.8,131 24.5,131.3 26.2,131.4 28,131.2 29.8,131.6 31.5,132.2 33.2,133.1 35,133.5 36.8,133.7 38.5,134.6 40.2,134.7 42,135.3 43.8,135.4 45.5,135.6 47.2,136.5 49,136.5 50.8,136.8 52.5,137.6 54.2,137.9 56,137.9 57.8,138.7 59.5,138.8 61.2,138.9 63,138.5 64.8,138.9 66.5,138.7 68.2,138.8 70,138.7 71.8,138.3 73.5,138.3 75.2,138.1 77,138 78.8,137.9 80.5,138 82.2,138.1 84,137.7 85.8,138.3 87.5,138.2 89.2,138.4 91,138.9 92.8,138.8 94.5,138.9 96.2,139.2 98,139.5 99.8,139.3 101.5,140 103.2,139.6 105,140.2 106.8,140.4 108.5,140.1 110.2,140.7 112,140.6 113.8,140.9 115.5,141 117.2,141.9 119,142.9 120.8,143.6 122.5,143.2 124.2,143.7 126,143.9 127.8,144 129.5,143.7 131.2,143.9 133,144.1 134.8,144.3 136.5,144 138.2,144.6 140,144.9 141.8,145.2 143.5,144.9 145.2,145.7 147,145.4 148.8,146.8 150.5,149.5 152.2,150.9 154,150.6 155.8,150.9 157.5,150.7 159.2,150.5 161,150.5 162.8,150.4 164.5,150.3 166.2,150.3 168,150.6 169.8,150.8 171.5,150.5 173.2,150.7 175,151.6 176.8,151.6 178.5,151.8 180.2,151.9 182,152.4 183.8,152.8 185.5,152.9 187.2,153.1 189,153.2 190.8,153.8 192.5,153.1 194.2,153.2 196,153.3 197.8,152.7 199.5,152.9 201.2,152.9 203,152.5 204.8,152.5 206.5,151.9 208.2,152 210,151.6 211.8,151.9 213.5,151.4 215.2,151.4 217,151.5 218.8,151.3 220.5,151.2 222.2,150.8 224,150.7 225.8,151 227.5,151 229.2,151 231,151.1 232.8,151.1 234.5,151.3 236.2,151.8 238,151.9 239.8,151.8 241.5,151.9 243.2,151.9 245,151.8 246.8,152.1 248.5,152.5 250.2,152.6 252,152.5 253.8,152.8 255.5,152.9 257.2,153 259,153.1 260.8,153.3 262.5,153.9 264.2,154.9 266,155.4 267.8,155.9 269.5,156.5 271.2,156.9 273,157.1 274.8,157.9 276.5,158.1 278.2,158.2 280,157.9 281.8,158.3 283.5,158.3 285.2,158.6 287,158.6 288.8,158.9 290.5,158.9 292.2,159.1 294,158.9 295.8,159.5 297.5,159.9 299.2,160.4 301,160.5 302.8,161.2 304.5,161.6 306.2,161.6 308,161.7 309.8,161.7 311.5,161.4 313.2,161.4 315,161.1 316.8,161.5 318.5,161.4 320.2,160.9 322,160.9 323.8,160.7 325.5,160.8 327.2,160.6 329,161.1 330.8,161.1 332.5,161.2 334.2,161.2 336,161.4 337.8,161.6 339.5,161.6 341.2,161.8 343,161.6 344.8,162.3 346.5,163 348.2,163.7 350,164 351.8,164.9 353.5,165.4 355.2,165.6 357,166.5 358.8,167.2 360.5,167.9 362.2,168.8 364,169.8 365.8,170.5 367.5,171.4 369.2,171.8 371,172.5 372.8,172.9 374.5,173.5 376.2,173.9 378,174.2 379.8,175 381.5,174.9 383.2,175.6 385,178 386.8,180.5 388.5,180.6 390.2,181.3 392,181.2 393.8,181.3 395.5,181.9 397.2,181.9 399,182.4 400.8,182.6 402.5,182.8 404.2,183.2 406,183.2 407.8,183.1 409.5,183.4 411.2,183.4 413,182.2 414.8,180 416.5,179.8 418.2,179.9 420,180.3 421.8,180.5 423.5,180.4 425.2,180.4 427,180.9 428.8,180.6 430.5,180.9 432.2,181.4 434,181.7 435.8,181.6 437.5,182.2 439.2,182.6 441,182.5 442.8,182.8 444.5,182.9 446.2,183.2 448,183.9 449.8,183.8 451.5,184.4 453.2,184.7 455,184.8 456.8,185 458.5,185.7 460.2,185.7 462,186 463.8,186.3 465.5,187 467.2,187 469,187.2 470.8,187.6 472.5,187.6 474.2,188 476,188 477.8,188.1 479.5,188.5 481.2,188.6 483,188.2 484.8,188.4 486.5,188.2 488.2,188.5 490,188.4 491.8,188 493.5,187.9 495.2,187.8 497,188.2 498.8,187.8 500.5,187.9 502.2,187.7 504,187.8 505.8,187.7 507.5,187.7 509.2,187.3 511,187.6 512.8,187 514.5,186.7 516.2,186.1 518,185.7 519.8,185.4 521.5,185.2 523.2,185.2 525,185.6 526.8,185.5 528.5,185.3 530.2,185.5 532,185.7 533.8,186.1 535.5,186.7 537.2,187 539,187.3 540.8,188.1 542.5,187.7 544.2,187.6 546,187.6 547.8,187.3 549.5,187.1 551.2,187.2 553,186.7 554.8,187 556.5,187.7 558.2,187.8 560,188.4 561.8,188.6 563.5,188 565.2,188.4 567,188.1 568.8,187.9 570.5,187.7 572.2,187.8 574,188.4 575.8,189.5 577.5,191.3 579.2,191.8 581,191.9 582.8,192 584.5,192.1 586.2,192.5 588,192.8 589.8,192.7 591.5,193.2 593.2,194 595,194.4 596.8,194.8 598.5,194.8 600.2,195.7 602,196.3 603.8,196.7 605.5,197 607.2,197 609,197.9 610.8,198 612.5,198.6 614.2,199.2 616,199.5 617.8,199.5 619.5,200 621.2,200.8 623,200.7 624.8,201.4 626.5,201.7 628.2,201.6 630,201.9 631.8,201.7 633.5,201.8 635.2,202 637,201.9" fill="none" stroke="#2fa861" stroke-width="1.4" stroke-linejoin="round"/>
</svg></div>

<!-- header icons -->
<svg class="ic" style="left:0;top:0" width="1448" height="130" viewBox="0 0 1448 130">
  <!-- chevron -->
  <polyline points="207.2,39.6 212,43.55 207.2,47.5" fill="none" stroke="#fff" stroke-width="2"/>
  <!-- gear small -->
  <g transform="translate(292,41.9)">
    <path d="M-1.55,-5.80L-1.30,-8.20L1.30,-8.20L1.55,-5.80L4.24,-4.24L6.45,-5.22L7.75,-2.97L5.80,-1.55L5.80,1.55L7.75,2.97L6.45,5.22L4.24,4.24L1.55,5.80L1.30,8.20L-1.30,8.20L-1.55,5.80L-4.24,4.24L-6.45,5.22L-7.75,2.97L-5.80,1.55L-5.80,-1.55L-7.75,-2.97L-6.45,-5.22L-4.24,-4.24Z" fill="none" stroke="#fff" stroke-width="1.5"/>
    <circle r="1.9" fill="#b9b1ee"/>
  </g>
  <!-- carets -->
  <path d="M378,39.9 L388,39.9 L383,44.9 Z" fill="#fff"/>
  <path d="M344.2,95.6 L354,95.6 L349.1,100.4 Z" fill="#fff"/>
  <path d="M607,95.6 L616.8,95.6 L611.9,100.4 Z" fill="#fff"/>
  <path d="M707.3,95.6 L716.8,95.6 L712.05,100.1 Z" fill="#fff"/>
  <path d="M1335.1,40.9 L1343.6,40.9 L1339.35,45.1 Z" fill="#fff"/>
  <!-- calendar -->
  <g>
    <rect x="150.6" y="91.3" width="14.4" height="13.7" rx="1.3" fill="#fff"/>
    <rect x="152.1" y="89.6" width="2.9" height="3.2" rx="1.1" fill="#fff"/>
    <rect x="160.4" y="89.6" width="2.9" height="3.2" rx="1.1" fill="#fff"/>
    <rect x="153" y="95.2" width="9.6" height="7.4" fill="#3b2da9"/>
    <rect x="153.9" y="96.9" width="8" height="1.2" fill="#fff"/>
    <rect x="153.9" y="99.8" width="5.7" height="1.2" fill="#fff"/>
  </g>
  <!-- gray dot -->
  <circle cx="419" cy="97.2" r="5.2" fill="#cfcfd6"/>
  <!-- magnifier -->
  <circle cx="999.7" cy="40.5" r="5.3" fill="none" stroke="#fff" stroke-width="2.1"/>
  <line x1="1003.6" y1="44.4" x2="1008.6" y2="49.2" stroke="#fff" stroke-width="2.3" stroke-linecap="square"/>
  <!-- website logo -->
  <defs><clipPath id="gclip"><path d="M-14,-14 L0.5,-14 L0.5,2.5 L14,2.5 L14,14 L-14,14 Z"/></clipPath></defs>
  <g transform="translate(1237.4,44.2)">
    <path fill-rule="evenodd" d="M8.12,-1.18L10.53,-1.25L10.53,1.25L8.12,1.18L7.62,3.04L9.74,4.18L8.49,6.34L6.44,5.08L5.08,6.44L6.34,8.49L4.18,9.74L3.04,7.62L1.18,8.12L1.25,10.53L-1.25,10.53L-1.18,8.12L-3.04,7.62L-4.18,9.74L-6.34,8.49L-5.08,6.44L-6.44,5.08L-8.49,6.34L-9.74,4.18L-7.62,3.04L-8.12,1.18L-10.53,1.25L-10.53,-1.25L-8.12,-1.18L-7.62,-3.04L-9.74,-4.18L-8.49,-6.34L-6.44,-5.08L-5.08,-6.44L-6.34,-8.49L-4.18,-9.74L-3.04,-7.62L-1.18,-8.12L-1.25,-10.53L1.25,-10.53L1.18,-8.12L3.04,-7.62L4.18,-9.74L6.34,-8.49L5.08,-6.44L6.44,-5.08L8.49,-6.34L9.74,-4.18L7.62,-3.04ZM4.90,0 A4.90,4.90 0 1,0 -4.90,0 A4.90,4.90 0 1,0 4.90,0Z" fill="#72d400" clip-path="url(#gclip)"/>
  </g>
  <g transform="translate(1243.4,38.8)">
    <path fill-rule="evenodd" d="M5.37,-0.60L6.97,-0.63L6.97,0.63L5.37,0.60L5.10,1.78L6.55,2.46L6.01,3.59L4.57,2.87L3.82,3.82L4.84,5.06L3.86,5.84L2.87,4.57L1.78,5.10L2.16,6.66L0.94,6.94L0.60,5.37L-0.60,5.37L-0.94,6.94L-2.16,6.66L-1.78,5.10L-2.87,4.57L-3.86,5.84L-4.84,5.06L-3.82,3.82L-4.57,2.87L-6.01,3.59L-6.55,2.46L-5.10,1.78L-5.37,0.60L-6.97,0.63L-6.97,-0.63L-5.37,-0.60L-5.10,-1.78L-6.55,-2.46L-6.01,-3.59L-4.57,-2.87L-3.82,-3.82L-4.84,-5.06L-3.86,-5.84L-2.87,-4.57L-1.78,-5.10L-2.16,-6.66L-0.94,-6.94L-0.60,-5.37L0.60,-5.37L0.94,-6.94L2.16,-6.66L1.78,-5.10L2.87,-4.57L3.86,-5.84L4.84,-5.06L3.82,-3.82L4.57,-2.87L6.01,-3.59L6.55,-2.46L5.10,-1.78ZM2.90,0 A2.90,2.90 0 1,0 -2.90,0 A2.90,2.90 0 1,0 2.90,0Z" fill="#e9e9e2"/>
  </g>
</svg>

<!-- sidebar icons -->
<svg class="ic" style="left:0;top:0" width="112" height="874" viewBox="0 0 112 874">
  <!-- logo -->
  <path d="M36,20 C46,20 48,22.5 55,22.5 C62,22.5 64,20 74,20 Q82,20 82,28 L82,66 Q82,74 74,74 C64,74 62,71.5 55,71.5 C48,71.5 46,74 36,74 Q28,74 28,66 L28,28 Q28,20 36,20 Z" fill="#fff"/>
  <path d="M49,39.2 Q55,39.2 55,45 L55,52.8 M61,39.2 Q55,39.2 55,45" fill="none" stroke="#4a3cae" stroke-width="4.6" stroke-linecap="round"/>
  <path d="M44.6,56.3 L44.6,45 Q44.6,39.2 49.5,39.2 M60.5,39.2 Q65.4,39.2 65.4,45 L65.4,56.3" fill="none" stroke="#5b4bd6" stroke-width="4.6" stroke-linecap="butt"/>
  <circle cx="44.6" cy="56.3" r="2.3" fill="#5b4bd6"/><circle cx="65.4" cy="56.3" r="2.3" fill="#5b4bd6"/>
  <!-- dashboard -->
  <g fill="none" stroke="#fff" stroke-width="1.1">
    <circle cx="43.4" cy="115.3" r="3.5"/>
    <path d="M47,115.4 L67.5,115.4 L67.5,126.4 L43.5,126.4 L43.5,119"/>
    <rect x="43.5" y="130.5" width="10" height="6.8" rx="0.6"/>
    <rect x="57.5" y="130.5" width="10" height="6.8" rx="0.6"/>
  </g>
  <!-- reports -->
  <g stroke="#a99cf6" stroke-width="1.25" stroke-linecap="round" fill="none">
    <line x1="43.5" y1="209.5" x2="43.5" y2="218.7"/>
    <line x1="49.5" y1="214.5" x2="49.5" y2="218.7"/>
    <line x1="55.5" y1="208.3" x2="55.5" y2="218.7"/>
    <line x1="61.5" y1="205.3" x2="61.5" y2="218.7"/>
    <line x1="67.5" y1="199.4" x2="67.5" y2="218.7"/>
    <path d="M45.5,194.6 A4.2,4.2 0 1,0 48.5,199.5"/>
  </g>
  <!-- segmentation -->
  <g fill="none" stroke="#fff" stroke-width="1.15">
    <rect x="41.6" y="276.5" width="11" height="11" rx="0.5"/>
    <rect x="57.6" y="276.5" width="11" height="11" rx="0.5"/>
    <rect x="41.6" y="292.6" width="11" height="11" rx="0.5"/>
    <rect x="57.6" y="292.6" width="11" height="11" rx="0.5"/>
    <circle cx="46.9" cy="280.8" r="2.3" stroke-width="0.9"/>
    <path d="M43,286.6 Q46.9,283 50.8,286.6" stroke-width="0.9"/>
  </g>
  <!-- activity -->
  <g fill="none" stroke="#fff" stroke-width="1.15">
    <path d="M41.2,375 A14.2,14.2 0 1,0 41.7,364.8"/>
    <path d="M40.6,361.2 L40.6,367.4 L46.8,367.4"/>
    <path d="M54.5,365.2 L54.5,373.6 L59.2,377.3"/>
  </g>
  <!-- settings -->
  <g transform="translate(54.5,453.4)" fill="none" stroke="#fff" stroke-width="1.15">
    <path d="M-2.21,-10.06L-1.65,-13.90L1.65,-13.90L2.21,-10.06L5.55,-8.67L8.67,-10.99L10.99,-8.67L8.67,-5.55L10.06,-2.21L13.90,-1.65L13.90,1.65L10.06,2.21L8.67,5.55L10.99,8.67L8.67,10.99L5.55,8.67L2.21,10.06L1.65,13.90L-1.65,13.90L-2.21,10.06L-5.55,8.67L-8.67,10.99L-10.99,8.67L-8.67,5.55L-10.06,2.21L-13.90,1.65L-13.90,-1.65L-10.06,-2.21L-8.67,-5.55L-10.99,-8.67L-8.67,-10.99L-5.55,-8.67Z"/>
    <circle r="4.3"/>
  </g>
  <!-- feedback -->
  <g fill="none" stroke="#d8d8d8" stroke-width="1.2">
    <circle cx="54.9" cy="825" r="14.3"/>
    <path d="M50.3,830.4 Q54.9,834 59.5,830.4" stroke="#fff"/>
  </g>
  <path d="M50.30,819.20L51.24,821.51L53.72,821.69L51.82,823.29L52.42,825.71L50.30,824.40L48.18,825.71L48.78,823.29L46.88,821.69L49.36,821.51Z M59.60,819.20L60.54,821.51L63.02,821.69L61.12,823.29L61.72,825.71L59.60,824.40L57.48,825.71L58.08,823.29L56.18,821.69L58.66,821.51Z" fill="#fff"/>
</svg>

<svg class="ic" style="left:309.2px;top:161.8px" width="24" height="24" viewBox="0 0 24 24"><circle cx="12" cy="12" r="9.05" fill="none" stroke="#7b808c" stroke-width="1.9"/><rect x="10.95" y="7.2" width="2.1" height="1.9" fill="#7b808c"/><rect x="10.95" y="11.1" width="2.1" height="5.8" fill="#7b808c"/></svg>
<svg class="ic" style="left:1046.1px;top:162.4px" width="24" height="24" viewBox="0 0 24 24"><circle cx="12" cy="12" r="9.05" fill="none" stroke="#7b808c" stroke-width="1.9"/><rect x="10.95" y="7.2" width="2.1" height="1.9" fill="#7b808c"/><rect x="10.95" y="11.1" width="2.1" height="5.8" fill="#7b808c"/></svg>
<svg class="ic" style="left:276.1px;top:527.9px" width="24" height="24" viewBox="0 0 24 24"><circle cx="12" cy="12" r="9.05" fill="none" stroke="#7b808c" stroke-width="1.9"/><rect x="10.95" y="7.2" width="2.1" height="1.9" fill="#7b808c"/><rect x="10.95" y="11.1" width="2.1" height="5.8" fill="#7b808c"/></svg>
<svg class="ic" style="left:943.6px;top:527.9px" width="24" height="24" viewBox="0 0 24 24"><circle cx="12" cy="12" r="9.05" fill="none" stroke="#7b808c" stroke-width="1.9"/><rect x="10.95" y="7.2" width="2.1" height="1.9" fill="#7b808c"/><rect x="10.95" y="11.1" width="2.1" height="5.8" fill="#7b808c"/></svg>
<svg class="ic" style="left:743.0px;top:165.3px" width="14" height="19" viewBox="0 0 14 19"><path d="M7,1.3 L7,17.6 M1.9,12.5 L7,17.6 L12.1,12.5" fill="none" stroke="#ee4036" stroke-width="2.1" stroke-linecap="round" stroke-linejoin="round"/></svg>
<svg class="ic" style="left:1395.8px;top:164.5px" width="14" height="19" viewBox="0 0 14 19"><path d="M7,17.7 L7,1.4 M1.9,6.5 L7,1.4 L12.1,6.5" fill="none" stroke="#4caf50" stroke-width="2.1" stroke-linecap="round" stroke-linejoin="round"/></svg>
<svg class="ic" style="left:742.7px;top:531.0px" width="14" height="19" viewBox="0 0 14 19"><path d="M7,1.3 L7,17.6 M1.9,12.5 L7,17.6 L12.1,12.5" fill="none" stroke="#ee4036" stroke-width="2.1" stroke-linecap="round" stroke-linejoin="round"/></svg>
<svg class="ic" style="left:1395.7px;top:531.0px" width="14" height="19" viewBox="0 0 14 19"><path d="M7,1.3 L7,17.6 M1.9,12.5 L7,17.6 L12.1,12.5" fill="none" stroke="#ee4036" stroke-width="2.1" stroke-linecap="round" stroke-linejoin="round"/></svg>
<span class="t" style="left:134.86px;top:34.81px;font-size:16.86px;font-weight:normal;color:#c3bdf0;transform:scaleX(0.9444);-webkit-text-stroke:0.30px #c3bdf0;">Reports</span>
<span class="t" style="left:228.90px;top:34.81px;font-size:16.86px;font-weight:bold;color:#ffffff;transform:scaleX(0.9194);-webkit-text-stroke:0.00px #ffffff;">Type:</span>
<span class="t" style="left:308.58px;top:34.81px;font-size:16.86px;font-weight:bold;color:#ffffff;transform:scaleX(0.8976);-webkit-text-stroke:0.00px #ffffff;">Services</span>
<span class="t" style="left:174.39px;top:91.80px;font-size:12.86px;font-weight:bold;color:#f2f0fc;transform:scaleX(0.9601);-webkit-text-stroke:0.00px #f2f0fc;">Last 365 Days</span>
<span class="t" style="left:378.00px;top:91.80px;font-size:12.90px;font-weight:bold;color:#e6e2fa;transform:scaleX(0.7914);-webkit-text-stroke:0.00px #e6e2fa;">vs</span>
<span class="t" style="left:437.29px;top:91.80px;font-size:12.86px;font-weight:bold;color:#f2f0fc;transform:scaleX(0.9367);-webkit-text-stroke:0.00px #f2f0fc;">Previous Period</span>
<span class="t" style="left:664.37px;top:91.80px;font-size:12.86px;font-weight:bold;color:#f2f0fc;transform:scaleX(0.9492);-webkit-text-stroke:0.00px #f2f0fc;">Days</span>
<span class="t" style="left:1020.00px;top:35.01px;font-size:14.83px;font-weight:bold;color:#cdc6f5;transform:scaleX(0.8862);-webkit-text-stroke:0.00px #cdc6f5;">Search reports...</span>
<span class="t" style="left:1260.78px;top:36.80px;font-size:12.79px;font-weight:bold;color:#ffffff;transform:scaleX(0.9699);-webkit-text-stroke:0.00px #ffffff;">MyWebsite</span>
<span class="t" style="left:1391.86px;top:34.11px;font-size:17.30px;font-weight:bold;color:#c690f5;transform:scaleX(0.9398);-webkit-text-stroke:0.00px #c690f5;">MG</span>
<span class="t" style="left:20.69px;top:149.81px;font-size:14.32px;font-weight:bold;color:#ffffff;transform:scaleX(0.9299);-webkit-text-stroke:0.00px #ffffff;">Dashboard</span>
<span class="t" style="left:29.76px;top:231.81px;font-size:14.32px;font-weight:bold;color:#ffffff;transform:scaleX(0.9362);-webkit-text-stroke:0.00px #ffffff;">Reports</span>
<span class="t" style="left:11.70px;top:313.81px;font-size:14.32px;font-weight:bold;color:#ffffff;transform:scaleX(0.9320);-webkit-text-stroke:0.00px #ffffff;">Segmentation</span>
<span class="t" style="left:31.20px;top:395.81px;font-size:14.32px;font-weight:bold;color:#ffffff;transform:scaleX(0.9064);-webkit-text-stroke:0.00px #ffffff;">Activity</span>
<span class="t" style="left:29.00px;top:477.81px;font-size:14.32px;font-weight:bold;color:#ffffff;transform:scaleX(0.9204);-webkit-text-stroke:0.00px #ffffff;">Settings</span>
<span class="t" style="left:23.98px;top:848.91px;font-size:14.32px;font-weight:bold;color:#ffffff;transform:scaleX(0.9297);-webkit-text-stroke:0.00px #ffffff;">Feedback</span>
<span class="t" style="left:150.39px;top:164.70px;font-size:18.02px;font-weight:normal;color:#43474e;transform:scaleX(0.9701);-webkit-text-stroke:0.30px #43474e;">Services Revenue</span>
<span class="t" style="left:390.60px;top:165.40px;font-size:16.00px;font-weight:bold;color:#4a4c50;transform:scaleX(0.9617);-webkit-text-stroke:0.00px #4a4c50;">$350.19k USD</span>
<span class="t" style="left:496.80px;top:165.40px;font-size:16.00px;font-weight:normal;color:#b4b4b4;transform:scaleX(0.9573);-webkit-text-stroke:0.30px #b4b4b4;">/ $420.69k USD</span>
<span class="t" style="left:621.69px;top:157.80px;font-size:31.40px;font-weight:normal;color:#ee4036;transform:scaleX(0.9078);-webkit-text-stroke:0.75px #ee4036;">-16,76%</span>
<span class="t" style="left:804.60px;top:155.11px;font-size:18.02px;font-weight:normal;color:#43474e;transform:scaleX(0.9596);-webkit-text-stroke:0.30px #43474e;">Average Revenue Per</span>
<span class="t" style="left:803.58px;top:174.41px;font-size:18.02px;font-weight:normal;color:#43474e;transform:scaleX(1.0067);-webkit-text-stroke:0.30px #43474e;">Service</span>
<span class="t" style="left:1094.80px;top:165.61px;font-size:16.00px;font-weight:bold;color:#4a4c50;transform:scaleX(0.9677);-webkit-text-stroke:0.00px #4a4c50;">$31.3 USD</span>
<span class="t" style="left:1175.80px;top:165.61px;font-size:16.00px;font-weight:normal;color:#b4b4b4;transform:scaleX(0.9508);-webkit-text-stroke:0.30px #b4b4b4;">/ $26.51 USD</span>
<span class="t" style="left:1282.25px;top:158.31px;font-size:29.65px;font-weight:normal;color:#4caf50;transform:scaleX(0.9738);-webkit-text-stroke:0.75px #4caf50;">18.07%</span>
<span class="t" style="left:150.81px;top:531.11px;font-size:18.02px;font-weight:normal;color:#43474e;transform:scaleX(0.9953);-webkit-text-stroke:0.30px #43474e;">New Services</span>
<span class="t" style="left:510.22px;top:531.71px;font-size:16.57px;font-weight:bold;color:#4a4c50;transform:scaleX(0.9702);-webkit-text-stroke:0.00px #4a4c50;">1.32k</span>
<span class="t" style="left:555.81px;top:531.70px;font-size:16.00px;font-weight:normal;color:#b4b4b4;transform:scaleX(1.0123);-webkit-text-stroke:0.30px #b4b4b4;">/ 3.08k</span>
<span class="t" style="left:619.27px;top:523.71px;font-size:31.40px;font-weight:normal;color:#ee4036;transform:scaleX(0.9252);-webkit-text-stroke:0.75px #ee4036;">-57.14%</span>
<span class="t" style="left:804.60px;top:531.11px;font-size:18.02px;font-weight:normal;color:#43474e;transform:scaleX(0.9941);-webkit-text-stroke:0.30px #43474e;">Active Services</span>
<span class="t" style="left:1172.39px;top:531.71px;font-size:16.57px;font-weight:bold;color:#4a4c50;transform:scaleX(0.9951);-webkit-text-stroke:0.00px #4a4c50;">1.2k</span>
<span class="t" style="left:1208.81px;top:531.70px;font-size:16.00px;font-weight:normal;color:#b4b4b4;transform:scaleX(1.0123);-webkit-text-stroke:0.30px #b4b4b4;">/ 1.69k</span>
<span class="t" style="left:1272.27px;top:523.71px;font-size:31.40px;font-weight:normal;color:#ee4036;transform:scaleX(0.9252);-webkit-text-stroke:0.75px #ee4036;">-28.99%</span>
</body></html>
